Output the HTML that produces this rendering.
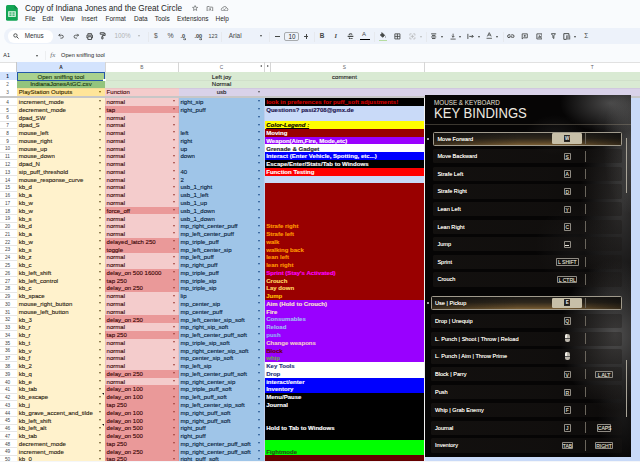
<!DOCTYPE html><html><head><meta charset="utf-8"><style>
*{box-sizing:border-box;margin:0;padding:0}
html,body{width:640px;height:462px;overflow:hidden;background:#f9fbfd;font-family:"Liberation Sans",sans-serif}
.ab{position:absolute}
.c{position:absolute;font-size:6.05px;line-height:7.77px;white-space:nowrap;overflow:hidden;padding-left:1.8px;-webkit-text-stroke:0.12px currentColor}
.dd{position:absolute;width:0;height:0;border-left:1.7px solid transparent;border-right:1.7px solid transparent;border-top:2.1px solid #555}
.rh{position:absolute;left:0;width:17px;font-size:4.7px;color:#45484c;text-align:center;background:#fff;padding-right:2px}
.hl{position:absolute;background:#e2e2e2}
.menu{position:absolute;top:14.6px;font-size:6.45px;color:#1f1f1f;line-height:8px}
.tb{position:absolute;color:#444746}
.kb{position:absolute;left:0;height:14.2px;background:rgba(30,27,24,0.82);border-radius:1.5px}
.kl{position:absolute;left:5px;top:0;line-height:14.2px;font-size:5.6px;color:#f2eee6;white-space:nowrap;text-shadow:0 0 0.25px #f2eee6}
.kk{position:absolute;height:7.4px;border:0.5px solid #8f8b83;border-radius:0.9px;font-size:5px;line-height:6.4px;color:#e6e2da;text-align:center;-webkit-text-stroke:0.1px #e6e2da}
.sepv{position:absolute;width:0.7px;height:10.5px;background:#6a655c}
</style></head><body>

<div class="ab" style="left:0;top:0;width:640px;height:62px;background:#f9fbfd"></div>
<svg class="ab" style="left:6.4px;top:4.9px" width="11.8" height="15.8" viewBox="0 0 12 16">
<path d="M1.6 0 H8.6 L12 3.6 V14.4 Q12 16 10.4 16 H1.6 Q0 16 0 14.4 V1.6 Q0 0 1.6 0Z" fill="#12a454"/>
<path d="M8.6 0 V2.9 Q8.6 3.6 9.3 3.6 H12Z" fill="#0d8a45"/>
<rect x="2.8" y="6.9" width="6.6" height="4.6" fill="none" stroke="#dff5e6" stroke-width="1.2"/>
<line x1="2.8" y1="9.2" x2="9.4" y2="9.2" stroke="#dff5e6" stroke-width="0.9"/>
<line x1="6.1" y1="6.9" x2="6.1" y2="11.5" stroke="#dff5e6" stroke-width="0.9"/>
</svg>
<div class="ab" style="left:25px;top:4.3px;font-size:8.2px;line-height:10px;color:#1f1f1f;white-space:nowrap">Copy of Indiana Jones and the Great Circle</div>
<svg class="ab" style="left:192px;top:5.2px" width="6.2" height="6" viewBox="0 0 24 23"><path d="M12 2 L14.9 8.6 L22 9.2 L16.6 13.9 L18.2 21 L12 17.3 L5.8 21 L7.4 13.9 L2 9.2 L9.1 8.6Z" fill="none" stroke="#444746" stroke-width="2.2" stroke-linejoin="round"/></svg>
<svg class="ab" style="left:206px;top:5.5px" width="7.8" height="5.6" viewBox="0 0 24 20"><path d="M2 3 Q2 1.5 3.5 1.5 H9 L11 4 H20.5 Q22 4 22 5.5 V17 Q22 18.5 20.5 18.5 H3.5 Q2 18.5 2 17Z" fill="none" stroke="#444746" stroke-width="2.2"/><path d="M11 8 L15 11.2 L11 14.4 M7.5 11.2 H15" fill="none" stroke="#444746" stroke-width="2"/></svg>
<svg class="ab" style="left:219.6px;top:5.8px" width="9.2" height="5.3" viewBox="0 0 28 20"><path d="M7 18 Q1.5 18 1.5 12.8 Q1.5 8 6.5 7.6 Q8.5 2 14.5 2 Q21 2 22.2 8.2 Q26.5 8.8 26.5 13 Q26.5 18 21.5 18Z" fill="none" stroke="#444746" stroke-width="2.2"/><path d="M9.5 11.5 L12.8 14.6 L18.8 8.6" fill="none" stroke="#444746" stroke-width="2.2"/></svg>
<div class="menu" style="left:25px">File</div>
<div class="menu" style="left:42.2px">Edit</div>
<div class="menu" style="left:60.6px">View</div>
<div class="menu" style="left:81.3px">Insert</div>
<div class="menu" style="left:105.5px">Format</div>
<div class="menu" style="left:134px">Data</div>
<div class="menu" style="left:154.7px">Tools</div>
<div class="menu" style="left:177px">Extensions</div>
<div class="menu" style="left:215.5px">Help</div>
<div class="ab" style="left:4px;top:27.8px;width:700px;height:16.4px;border-radius:8.2px;background:#edf2fa"></div>
<div class="ab" style="left:7.8px;top:30.4px;width:45px;height:12.4px;border-radius:6.2px;background:#fff"></div>
<svg class="ab" style="left:12.8px;top:33.2px" width="6.2" height="6.2" viewBox="0 0 24 24"><circle cx="9.5" cy="9.5" r="6.5" fill="none" stroke="#444746" stroke-width="3.50"/><line x1="14.5" y1="14.5" x2="21.5" y2="21.5" stroke="#444746" stroke-width="3.75"/></svg>
<div class="ab" style="left:24.8px;top:32.2px;font-size:6.3px;line-height:8px;color:#2d2f31">Menus</div>
<svg class="ab" style="left:58.3px;top:33.2px" width="6.4" height="6" viewBox="0 0 24 22"><path d="M8 3 L3 8 L8 13 M3 8 H14 Q20 8 20 13.5 Q20 19 14 19 H9" fill="none" stroke="#444746" stroke-width="3.25"/></svg>
<svg class="ab" style="left:72.6px;top:33.2px" width="6.4" height="6" viewBox="0 0 24 22"><path d="M16 3 L21 8 L16 13 M21 8 H10 Q4 8 4 13.5 Q4 19 10 19 H15" fill="none" stroke="#444746" stroke-width="3.25"/></svg>
<svg class="ab" style="left:86px;top:32.8px" width="7.4" height="6.8" viewBox="0 0 24 22"><path d="M6 6 V2 H18 V6 M3 7 H21 V16 H18 M6 16 H3 V7 M6 12 H18 V21 H6Z" fill="none" stroke="#444746" stroke-width="3.00"/></svg>
<svg class="ab" style="left:99.4px;top:32.4px" width="7.4" height="7.6" viewBox="0 0 24 24"><path d="M4 2 H17 V7 H4Z M17 4.5 H20 V11 H11 V15 M9 15 H13 V22 H9Z" fill="none" stroke="#444746" stroke-width="3.00"/></svg>
<div class="ab" style="left:114.5px;top:32.3px;font-size:6.3px;line-height:8px;color:#b1b3b4">100%</div>
<div class="dd" style="left:137.8px;top:35.4px;border-top-color:#b1b3b4"></div>
<div class="ab" style="left:147.8px;top:31.5px;width:0.5px;height:10px;background:#e6e9ee"></div>
<div class="ab" style="left:154px;top:32px;font-size:6.6px;line-height:8px;color:#555">$</div>
<div class="ab" style="left:167.4px;top:31.8px;font-size:6.9px;line-height:8px;color:#444746">%</div>
<div class="ab" style="left:180.4px;top:31.8px;font-size:5.6px;line-height:8px;color:#444746;font-weight:bold">.0</div>
<svg class="ab" style="left:183.2px;top:38.3px" width="3.6" height="2.4" viewBox="0 0 12 8"><path d="M0 4 H8 M6 1 L10 4 L6 7" fill="none" stroke="#444746" stroke-width="2.50"/></svg>
<div class="ab" style="left:194.4px;top:31.8px;font-size:5.6px;line-height:8px;color:#444746;font-weight:bold">.00</div>
<svg class="ab" style="left:198.5px;top:38.3px" width="3.6" height="2.4" viewBox="0 0 12 8"><path d="M0 4 H8 M6 1 L10 4 L6 7" fill="none" stroke="#444746" stroke-width="2.50"/></svg>
<div class="ab" style="left:208.6px;top:32.4px;font-size:5.4px;line-height:8px;color:#444746">123</div>
<div class="ab" style="left:220.8px;top:31.5px;width:0.5px;height:10px;background:#e6e9ee"></div>
<div class="ab" style="left:228.8px;top:32.2px;font-size:6.4px;line-height:8px;color:#444746">Arial</div>
<div class="dd" style="left:259.5px;top:35.4px;border-top-color:#444746"></div>
<div class="ab" style="left:269.4px;top:31.5px;width:0.5px;height:10px;background:#e6e9ee"></div>
<div class="ab" style="left:274.8px;top:36.2px;width:5px;height:0.9px;background:#444746"></div>
<div class="ab" style="left:284.4px;top:31.6px;width:15px;height:9.6px;border:0.6px solid #a8abae;border-radius:2px;font-size:6.3px;line-height:8.4px;text-align:center;color:#1f1f1f">10</div>
<div class="ab" style="left:303.6px;top:36.2px;width:4.8px;height:0.9px;background:#444746"></div>
<div class="ab" style="left:305.55px;top:34.3px;width:0.9px;height:4.8px;background:#444746"></div>
<div class="ab" style="left:313.5px;top:31.5px;width:0.5px;height:10px;background:#e6e9ee"></div>
<div class="ab" style="left:319.7px;top:32.2px;font-size:6.4px;line-height:8px;color:#444746;font-weight:bold">B</div>
<div class="ab" style="left:334.4px;top:32.2px;font-size:6.4px;line-height:8px;color:#444746;font-weight:bold;font-style:italic;font-family:'Liberation Serif'">I</div>
<svg class="ab" style="left:347.2px;top:32.6px" width="7" height="6.8" viewBox="0 0 24 24"><path d="M7 7 Q7 2.5 12 2.5 Q16.5 2.5 17.5 6 M2 12 H22 M7.5 16.5 Q8.5 21.5 12.5 21.5 Q17.5 21.5 17.5 17.5" fill="none" stroke="#444746" stroke-width="4.00"/></svg>
<div class="ab" style="left:362px;top:31px;font-size:6px;line-height:7px;color:#444746">A</div>
<div class="ab" style="left:359.8px;top:39.3px;width:10px;height:1.1px;background:#000"></div>
<div class="ab" style="left:373.8px;top:31.5px;width:0.5px;height:10px;background:#e6e9ee"></div>
<svg class="ab" style="left:378.8px;top:31.8px" width="8" height="7" viewBox="0 0 24 21"><path d="M4 9 L10 3 L17 10 L11 16 Z" fill="#444746" stroke="#444746" stroke-width="2.50"/><path d="M9 2 L6 -1" stroke="#444746" stroke-width="3.00"/><path d="M19.5 12 Q22 16 20 17.5 Q17.5 17 19.5 12Z" fill="#444746"/></svg>
<div class="ab" style="left:378.6px;top:39.5px;width:8.6px;height:0.9px;background:#b6dca0"></div>
<svg class="ab" style="left:394.4px;top:32.8px" width="6.8" height="6.8" viewBox="0 0 24 24"><path d="M3 3 H21 V21 H3Z M12 3 V21 M3 12 H21" fill="none" stroke="#444746" stroke-width="3.00"/></svg>
<svg class="ab" style="left:409.4px;top:32.8px" width="6.8" height="6.8" viewBox="0 0 24 24"><path d="M3 3 H9 M15 3 H21 V9 M21 15 V21 H15 M9 21 H3 V15 M3 9 V3 M12 6 V18 M6 12 H18" fill="none" stroke="#b8babb" stroke-width="2.75"/></svg>
<div class="dd" style="left:420px;top:35.6px;border-top-color:#b8babb"></div>
<div class="ab" style="left:425.8px;top:31.5px;width:0.5px;height:10px;background:#e6e9ee"></div>
<svg class="ab" style="left:430.3px;top:32.8px" width="7.4" height="6.8" viewBox="0 0 24 24"><path d="M3 3 H21 M6 8.5 H18 M3 14 H21 M6 19.5 H18" fill="none" stroke="#444746" stroke-width="3.25"/></svg>
<div class="dd" style="left:441px;top:35.6px;border-top-color:#444746"></div>
<svg class="ab" style="left:449.6px;top:32.6px" width="6.2" height="7" viewBox="0 0 24 26"><path d="M12 2 V16 M7 11 L12 16 L17 11 M2 23 H22" fill="none" stroke="#444746" stroke-width="3.25"/></svg>
<div class="dd" style="left:458.8px;top:35.6px;border-top-color:#444746"></div>
<svg class="ab" style="left:467px;top:32.8px" width="7.4" height="6.8" viewBox="0 0 26 24"><path d="M3 3 V21 M8 12 H22 M17 7 L22 12 L17 17" fill="none" stroke="#444746" stroke-width="3.25"/></svg>
<div class="dd" style="left:477.5px;top:35.6px;border-top-color:#444746"></div>
<svg class="ab" style="left:485.7px;top:32.4px" width="6.5" height="7.2" viewBox="0 0 24 26"><path d="M5 16 L12 2 L19 16 M7.5 11 H16.5 M2 23 H22" fill="none" stroke="#444746" stroke-width="3.00"/></svg>
<div class="dd" style="left:495.8px;top:35.6px;border-top-color:#444746"></div>
<div class="ab" style="left:502.5px;top:31.5px;width:0.5px;height:10px;background:#e6e9ee"></div>
<svg class="ab" style="left:507.2px;top:34px" width="7.6" height="4.4" viewBox="0 0 26 14"><path d="M11 2 H7 Q2 2 2 7 Q2 12 7 12 H11 M15 2 H19 Q24 2 24 7 Q24 12 19 12 H15 M8 7 H18" fill="none" stroke="#444746" stroke-width="3.25"/></svg>
<svg class="ab" style="left:521.3px;top:32.8px" width="7.5" height="6.8" viewBox="0 0 24 24"><path d="M3 3 H21 V17 H7 L3 21Z M12 6.5 V13.5 M8.5 10 H15.5" fill="none" stroke="#444746" stroke-width="3.00"/></svg>
<svg class="ab" style="left:535.6px;top:32.8px" width="6.8" height="6.8" viewBox="0 0 24 24"><path d="M3 3 H21 V21 H3Z M8 13 V17 M12 8 V17 M16 11 V17" fill="none" stroke="#444746" stroke-width="3.00"/></svg>
<svg class="ab" style="left:551.3px;top:33px" width="4.8" height="6.2" viewBox="0 0 16 20"><path d="M1 2 H15 L9.5 9 V18 L6.5 16 V9Z" fill="none" stroke="#444746" stroke-width="3.00"/></svg>
<svg class="ab" style="left:563.3px;top:32.6px" width="8" height="7" viewBox="0 0 24 22"><path d="M2 2 H18 V8 M2 2 V20 H10" fill="none" stroke="#444746" stroke-width="3.00"/><rect x="9" y="8" width="13" height="12" fill="#444746"/><path d="M9 12 H22 M9 16 H22 M15.5 8 V20" stroke="#edf2fa" stroke-width="1.62"/></svg>
<div class="dd" style="left:573.5px;top:35.6px;border-top-color:#444746"></div>
<div class="ab" style="left:584.2px;top:32.2px;font-size:6.4px;line-height:8px;color:#444746">&#931;</div>
<div class="ab" style="left:3.3px;top:51.3px;font-size:5.4px;line-height:8px;color:#1f1f1f">A1</div>
<div class="dd" style="left:36.4px;top:54.6px;border-top-color:#444746"></div>
<div class="ab" style="left:44.6px;top:51px;width:0.5px;height:9px;background:#eceef0"></div>
<div class="ab" style="left:50.3px;top:50.6px;font-size:7px;line-height:8px;color:#6a6f74;font-style:italic;font-family:'Liberation Serif'">fx</div>
<div class="ab" style="left:61px;top:51.4px;font-size:5.65px;line-height:8px;color:#1f1f1f;white-space:nowrap">Open sniffing tool</div>
<div class="ab" style="left:0;top:61.8px;width:640px;height:400.2px;background:#fff"></div>
<div class="ab" style="left:0;top:61.8px;width:640px;height:10.200000000000003px;background:#fff;border-top:0.5px solid #e1e1e1"></div>
<div class="ab" style="left:17.0px;top:61.8px;width:87.8px;height:10.200000000000003px;background:#d3e3fd"></div>
<div class="ab" style="left:17.0px;top:62.599999999999994px;width:87.8px;height:9px;text-align:center;font-size:4.8px;line-height:9px;color:#1f1f1f;font-weight:bold">A</div>
<div class="ab" style="left:104.5px;top:61.8px;width:0.6px;height:10.200000000000003px;background:#d6d6d6"></div>
<div class="ab" style="left:104.8px;top:62.599999999999994px;width:73.89999999999999px;height:9px;text-align:center;font-size:4.8px;line-height:9px;color:#5f6368;font-weight:normal">B</div>
<div class="ab" style="left:178.39999999999998px;top:61.8px;width:0.6px;height:10.200000000000003px;background:#d6d6d6"></div>
<div class="ab" style="left:178.7px;top:62.599999999999994px;width:85.69999999999999px;height:9px;text-align:center;font-size:4.8px;line-height:9px;color:#5f6368;font-weight:normal">C</div>
<div class="ab" style="left:264.09999999999997px;top:61.8px;width:0.6px;height:10.200000000000003px;background:#d6d6d6"></div>
<div class="ab" style="left:264.4px;top:62.599999999999994px;width:160.10000000000002px;height:9px;text-align:center;font-size:4.8px;line-height:9px;color:#5f6368;font-weight:normal">S</div>
<div class="ab" style="left:424.2px;top:61.8px;width:0.6px;height:10.200000000000003px;background:#d6d6d6"></div>
<div class="ab" style="left:424.5px;top:62.599999999999994px;width:335.5px;height:9px;text-align:center;font-size:4.8px;line-height:9px;color:#5f6368;font-weight:normal">T</div>
<div class="ab" style="left:759.7px;top:61.8px;width:0.6px;height:10.200000000000003px;background:#d6d6d6"></div>
<div class="ab" style="left:259.8px;top:65.1px;width:0;height:0;border-top:1.6px solid transparent;border-bottom:1.6px solid transparent;border-right:2px solid #555"></div>
<div class="ab" style="left:264.09999999999997px;top:72.0px;width:0.6px;height:23.799999999999997px;background:rgba(0,0,0,0.12)"></div>
<div class="ab" style="left:266.8px;top:65.1px;width:0;height:0;border-top:1.6px solid transparent;border-bottom:1.6px solid transparent;border-left:2px solid #555"></div>
<div class="ab" style="left:270.2px;top:61.8px;width:0.5px;height:10.200000000000003px;background:#d6d6d6"></div>
<div class="ab" style="left:0;top:71.5px;width:640px;height:0.6px;background:#c4c7c5"></div>
<div class="ab" style="left:15.8px;top:61.8px;width:1.3px;height:10.200000000000003px;background:#c8c8c8"></div>
<div class="ab" style="left:17.0px;top:72.0px;width:623.0px;height:16.099999999999994px;background:#d9ead3"></div>
<div class="ab" style="left:17.0px;top:72.0px;width:87.8px;height:8.200000000000003px;background:#a9d18e"></div>
<div class="ab" style="left:17.0px;top:80.2px;width:87.8px;height:7.8999999999999915px;background:#93c47d"></div>
<div class="ab" style="left:17.0px;top:88.1px;width:87.8px;height:7.700000000000003px;background:#ffe599"></div>
<div class="ab" style="left:104.8px;top:88.1px;width:73.89999999999999px;height:7.700000000000003px;background:#f4cccc"></div>
<div class="ab" style="left:178.7px;top:88.1px;width:461.3px;height:7.700000000000003px;background:#d9d2e9"></div>
<div class="ab" style="left:17.0px;top:79.9px;width:623px;height:0.5px;background:rgba(0,0,0,0.04)"></div>
<div class="ab" style="left:17.0px;top:87.8px;width:623px;height:0.5px;background:rgba(0,0,0,0.04)"></div>
<div class="rh" style="top:72.0px;height:8.200000000000003px;line-height:9.800000000000002px;overflow:hidden;background:#d3e3fd;color:#041e49;font-weight:bold">1</div>
<div class="rh" style="top:80.2px;height:7.8999999999999915px;line-height:9.499999999999991px;overflow:hidden;background:#fff;color:#5f6368;font-weight:normal">2</div>
<div class="rh" style="top:88.1px;height:7.700000000000003px;line-height:9.300000000000002px;overflow:hidden;background:#fff;color:#5f6368;font-weight:normal">3</div>
<div class="c" style="left:17.0px;top:72.5px;width:87.8px;height:8.200000000000003px;line-height:8.200000000000003px;color:#1b3a10;text-align:center;padding-left:0">Open sniffing tool</div>
<div class="c" style="left:17.0px;top:81.4px;width:87.8px;height:7.8999999999999915px;line-height:7.8999999999999915px;color:#1b3a10;text-align:center;padding-left:0">IndianaJonesAtGC.csv</div>
<div class="c" style="left:17.0px;top:88.89999999999999px;width:87.8px;height:7.700000000000003px;line-height:7.700000000000003px;color:#3a2e00;text-align:left;">PlayStation Outputs</div>
<div class="c" style="left:104.8px;top:88.89999999999999px;width:73.89999999999999px;height:7.700000000000003px;line-height:7.700000000000003px;color:#4a0c0c;text-align:left;">Function</div>
<div class="c" style="left:178.7px;top:72.5px;width:85.69999999999999px;height:8.200000000000003px;line-height:8.200000000000003px;color:#222;text-align:center;padding-left:0">Left joy</div>
<div class="c" style="left:178.7px;top:81.4px;width:85.69999999999999px;height:7.8999999999999915px;line-height:7.8999999999999915px;color:#222;text-align:center;padding-left:0">Normal</div>
<div class="c" style="left:178.7px;top:88.89999999999999px;width:85.69999999999999px;height:7.700000000000003px;line-height:7.700000000000003px;color:#222;text-align:center;padding-left:0">usb</div>
<div class="c" style="left:264.4px;top:72.5px;width:160.10000000000002px;height:8.200000000000003px;line-height:8.200000000000003px;color:#222;text-align:center;padding-left:0">comment</div>
<div class="dd" style="left:98.8px;top:91.1px;border-top-color:#7f6000"></div>
<div class="dd" style="left:258.4px;top:91.1px;border-top-color:#555"></div>
<div class="ab" style="left:17.0px;top:72.0px;width:88.1px;height:8.500000000000004px;border:1.1px solid #2458a8"></div>
<div class="ab" style="left:103.39999999999999px;top:79.2px;width:2.2px;height:2.2px;background:#2458a8;border:0.4px solid #fff"></div>
<div class="ab" style="left:0px;top:95.8px;width:640px;height:2.0px;background:#c7c7c7"></div>
<div class="rh" style="top:97.8px;height:8.17px;line-height:10.37px;overflow:hidden">4</div>
<div class="ab" style="left:17.0px;top:97.8px;width:87.8px;height:8.370000000000005px;background:#fff2cc"></div>
<div class="ab" style="left:104.8px;top:97.8px;width:73.89999999999999px;height:8.370000000000005px;background:#f4cccc"></div>
<div class="ab" style="left:178.7px;top:97.8px;width:85.69999999999999px;height:8.370000000000005px;background:#9fc5e8"></div>
<div class="ab" style="left:264.4px;top:97.8px;width:160.10000000000002px;height:8.370000000000005px;background:#c9daf8"></div>
<div class="ab" style="left:264.7px;top:97.8px;width:159.3px;height:8.370000000000005px;background:#000000"></div>
<div class="rh" style="top:105.57px;height:8.17px;line-height:10.37px;overflow:hidden">5</div>
<div class="ab" style="left:17.0px;top:105.57px;width:87.8px;height:8.370000000000005px;background:#fff2cc"></div>
<div class="ab" style="left:104.8px;top:105.57px;width:73.89999999999999px;height:8.370000000000005px;background:#ea9999"></div>
<div class="ab" style="left:178.7px;top:105.57px;width:85.69999999999999px;height:8.370000000000005px;background:#9fc5e8"></div>
<div class="ab" style="left:264.4px;top:105.57px;width:160.10000000000002px;height:8.370000000000005px;background:#c9daf8"></div>
<div class="rh" style="top:113.34px;height:8.17px;line-height:10.37px;overflow:hidden">6</div>
<div class="ab" style="left:17.0px;top:113.34px;width:87.8px;height:8.370000000000005px;background:#fff2cc"></div>
<div class="ab" style="left:104.8px;top:113.34px;width:73.89999999999999px;height:8.370000000000005px;background:#f4cccc"></div>
<div class="ab" style="left:178.7px;top:113.34px;width:85.69999999999999px;height:8.370000000000005px;background:#9fc5e8"></div>
<div class="ab" style="left:264.4px;top:113.34px;width:160.10000000000002px;height:8.370000000000005px;background:#c9daf8"></div>
<div class="rh" style="top:121.11px;height:8.17px;line-height:10.37px;overflow:hidden">7</div>
<div class="ab" style="left:17.0px;top:121.11px;width:87.8px;height:8.36999999999999px;background:#fff2cc"></div>
<div class="ab" style="left:104.8px;top:121.11px;width:73.89999999999999px;height:8.36999999999999px;background:#f4cccc"></div>
<div class="ab" style="left:178.7px;top:121.11px;width:85.69999999999999px;height:8.36999999999999px;background:#9fc5e8"></div>
<div class="ab" style="left:264.4px;top:121.11px;width:160.10000000000002px;height:8.36999999999999px;background:#c9daf8"></div>
<div class="ab" style="left:264.7px;top:121.11px;width:159.3px;height:8.36999999999999px;background:#ffff00"></div>
<div class="rh" style="top:128.88px;height:8.17px;line-height:10.37px;overflow:hidden">8</div>
<div class="ab" style="left:17.0px;top:128.88px;width:87.8px;height:8.370000000000005px;background:#fff2cc"></div>
<div class="ab" style="left:104.8px;top:128.88px;width:73.89999999999999px;height:8.370000000000005px;background:#f4cccc"></div>
<div class="ab" style="left:178.7px;top:128.88px;width:85.69999999999999px;height:8.370000000000005px;background:#9fc5e8"></div>
<div class="ab" style="left:264.4px;top:128.88px;width:160.10000000000002px;height:8.370000000000005px;background:#c9daf8"></div>
<div class="ab" style="left:264.7px;top:128.88px;width:159.3px;height:8.370000000000005px;background:#990000"></div>
<div class="rh" style="top:136.64999999999998px;height:8.17px;line-height:10.37px;overflow:hidden">9</div>
<div class="ab" style="left:17.0px;top:136.64999999999998px;width:87.8px;height:8.370000000000005px;background:#fff2cc"></div>
<div class="ab" style="left:104.8px;top:136.64999999999998px;width:73.89999999999999px;height:8.370000000000005px;background:#f4cccc"></div>
<div class="ab" style="left:178.7px;top:136.64999999999998px;width:85.69999999999999px;height:8.370000000000005px;background:#9fc5e8"></div>
<div class="ab" style="left:264.4px;top:136.64999999999998px;width:160.10000000000002px;height:8.370000000000005px;background:#c9daf8"></div>
<div class="ab" style="left:264.7px;top:136.64999999999998px;width:159.3px;height:8.370000000000005px;background:#9900ff"></div>
<div class="rh" style="top:144.42px;height:8.17px;line-height:10.37px;overflow:hidden">10</div>
<div class="ab" style="left:17.0px;top:144.42px;width:87.8px;height:8.370000000000005px;background:#fff2cc"></div>
<div class="ab" style="left:104.8px;top:144.42px;width:73.89999999999999px;height:8.370000000000005px;background:#f4cccc"></div>
<div class="ab" style="left:178.7px;top:144.42px;width:85.69999999999999px;height:8.370000000000005px;background:#9fc5e8"></div>
<div class="ab" style="left:264.4px;top:144.42px;width:160.10000000000002px;height:8.370000000000005px;background:#c9daf8"></div>
<div class="ab" style="left:264.7px;top:144.42px;width:159.3px;height:8.370000000000005px;background:#ffffff"></div>
<div class="rh" style="top:152.19px;height:8.17px;line-height:10.37px;overflow:hidden">11</div>
<div class="ab" style="left:17.0px;top:152.19px;width:87.8px;height:8.370000000000005px;background:#fff2cc"></div>
<div class="ab" style="left:104.8px;top:152.19px;width:73.89999999999999px;height:8.370000000000005px;background:#f4cccc"></div>
<div class="ab" style="left:178.7px;top:152.19px;width:85.69999999999999px;height:8.370000000000005px;background:#9fc5e8"></div>
<div class="ab" style="left:264.4px;top:152.19px;width:160.10000000000002px;height:8.370000000000005px;background:#c9daf8"></div>
<div class="ab" style="left:264.7px;top:152.19px;width:159.3px;height:8.370000000000005px;background:#0000ff"></div>
<div class="rh" style="top:159.95999999999998px;height:8.17px;line-height:10.37px;overflow:hidden">12</div>
<div class="ab" style="left:17.0px;top:159.95999999999998px;width:87.8px;height:8.370000000000005px;background:#fff2cc"></div>
<div class="ab" style="left:104.8px;top:159.95999999999998px;width:73.89999999999999px;height:8.370000000000005px;background:#f4cccc"></div>
<div class="ab" style="left:178.7px;top:159.95999999999998px;width:85.69999999999999px;height:8.370000000000005px;background:#9fc5e8"></div>
<div class="ab" style="left:264.4px;top:159.95999999999998px;width:160.10000000000002px;height:8.370000000000005px;background:#c9daf8"></div>
<div class="ab" style="left:264.7px;top:159.95999999999998px;width:159.3px;height:8.370000000000005px;background:#000000"></div>
<div class="rh" style="top:167.73px;height:8.17px;line-height:10.37px;overflow:hidden">13</div>
<div class="ab" style="left:17.0px;top:167.73px;width:87.8px;height:8.370000000000005px;background:#fff2cc"></div>
<div class="ab" style="left:104.8px;top:167.73px;width:73.89999999999999px;height:8.370000000000005px;background:#f4cccc"></div>
<div class="ab" style="left:178.7px;top:167.73px;width:85.69999999999999px;height:8.370000000000005px;background:#9fc5e8"></div>
<div class="ab" style="left:264.4px;top:167.73px;width:160.10000000000002px;height:8.370000000000005px;background:#c9daf8"></div>
<div class="ab" style="left:264.7px;top:167.73px;width:159.3px;height:8.370000000000005px;background:#ff0000"></div>
<div class="rh" style="top:175.5px;height:8.17px;line-height:10.37px;overflow:hidden">14</div>
<div class="ab" style="left:17.0px;top:175.5px;width:87.8px;height:8.370000000000005px;background:#fff2cc"></div>
<div class="ab" style="left:104.8px;top:175.5px;width:73.89999999999999px;height:8.370000000000005px;background:#f4cccc"></div>
<div class="ab" style="left:178.7px;top:175.5px;width:85.69999999999999px;height:8.370000000000005px;background:#9fc5e8"></div>
<div class="ab" style="left:264.4px;top:175.5px;width:160.10000000000002px;height:8.370000000000005px;background:#c9daf8"></div>
<div class="rh" style="top:183.26999999999998px;height:8.17px;line-height:10.37px;overflow:hidden">15</div>
<div class="ab" style="left:17.0px;top:183.26999999999998px;width:87.8px;height:8.370000000000005px;background:#fff2cc"></div>
<div class="ab" style="left:104.8px;top:183.26999999999998px;width:73.89999999999999px;height:8.370000000000005px;background:#f4cccc"></div>
<div class="ab" style="left:178.7px;top:183.26999999999998px;width:85.69999999999999px;height:8.370000000000005px;background:#9fc5e8"></div>
<div class="ab" style="left:264.4px;top:183.26999999999998px;width:160.10000000000002px;height:8.370000000000005px;background:#c9daf8"></div>
<div class="ab" style="left:264.7px;top:183.26999999999998px;width:159.3px;height:8.370000000000005px;background:#990000"></div>
<div class="rh" style="top:191.04px;height:8.17px;line-height:10.37px;overflow:hidden">16</div>
<div class="ab" style="left:17.0px;top:191.04px;width:87.8px;height:8.370000000000005px;background:#fff2cc"></div>
<div class="ab" style="left:104.8px;top:191.04px;width:73.89999999999999px;height:8.370000000000005px;background:#f4cccc"></div>
<div class="ab" style="left:178.7px;top:191.04px;width:85.69999999999999px;height:8.370000000000005px;background:#9fc5e8"></div>
<div class="ab" style="left:264.4px;top:191.04px;width:160.10000000000002px;height:8.370000000000005px;background:#c9daf8"></div>
<div class="ab" style="left:264.7px;top:191.04px;width:159.3px;height:8.370000000000005px;background:#990000"></div>
<div class="rh" style="top:198.81px;height:8.17px;line-height:10.37px;overflow:hidden">17</div>
<div class="ab" style="left:17.0px;top:198.81px;width:87.8px;height:8.370000000000005px;background:#fff2cc"></div>
<div class="ab" style="left:104.8px;top:198.81px;width:73.89999999999999px;height:8.370000000000005px;background:#f4cccc"></div>
<div class="ab" style="left:178.7px;top:198.81px;width:85.69999999999999px;height:8.370000000000005px;background:#9fc5e8"></div>
<div class="ab" style="left:264.4px;top:198.81px;width:160.10000000000002px;height:8.370000000000005px;background:#c9daf8"></div>
<div class="ab" style="left:264.7px;top:198.81px;width:159.3px;height:8.370000000000005px;background:#990000"></div>
<div class="rh" style="top:206.57999999999998px;height:8.17px;line-height:10.37px;overflow:hidden">18</div>
<div class="ab" style="left:17.0px;top:206.57999999999998px;width:87.8px;height:8.370000000000005px;background:#fff2cc"></div>
<div class="ab" style="left:104.8px;top:206.57999999999998px;width:73.89999999999999px;height:8.370000000000005px;background:#ea9999"></div>
<div class="ab" style="left:178.7px;top:206.57999999999998px;width:85.69999999999999px;height:8.370000000000005px;background:#9fc5e8"></div>
<div class="ab" style="left:264.4px;top:206.57999999999998px;width:160.10000000000002px;height:8.370000000000005px;background:#c9daf8"></div>
<div class="ab" style="left:264.7px;top:206.57999999999998px;width:159.3px;height:8.370000000000005px;background:#990000"></div>
<div class="rh" style="top:214.35px;height:8.17px;line-height:10.37px;overflow:hidden">19</div>
<div class="ab" style="left:17.0px;top:214.35px;width:87.8px;height:8.370000000000005px;background:#fff2cc"></div>
<div class="ab" style="left:104.8px;top:214.35px;width:73.89999999999999px;height:8.370000000000005px;background:#f4cccc"></div>
<div class="ab" style="left:178.7px;top:214.35px;width:85.69999999999999px;height:8.370000000000005px;background:#9fc5e8"></div>
<div class="ab" style="left:264.4px;top:214.35px;width:160.10000000000002px;height:8.370000000000005px;background:#c9daf8"></div>
<div class="ab" style="left:264.7px;top:214.35px;width:159.3px;height:8.370000000000005px;background:#990000"></div>
<div class="rh" style="top:222.12px;height:8.17px;line-height:10.37px;overflow:hidden">20</div>
<div class="ab" style="left:17.0px;top:222.12px;width:87.8px;height:8.370000000000005px;background:#fff2cc"></div>
<div class="ab" style="left:104.8px;top:222.12px;width:73.89999999999999px;height:8.370000000000005px;background:#f4cccc"></div>
<div class="ab" style="left:178.7px;top:222.12px;width:85.69999999999999px;height:8.370000000000005px;background:#9fc5e8"></div>
<div class="ab" style="left:264.4px;top:222.12px;width:160.10000000000002px;height:8.370000000000005px;background:#c9daf8"></div>
<div class="ab" style="left:264.7px;top:222.12px;width:159.3px;height:8.370000000000005px;background:#990000"></div>
<div class="rh" style="top:229.89px;height:8.17px;line-height:10.37px;overflow:hidden">21</div>
<div class="ab" style="left:17.0px;top:229.89px;width:87.8px;height:8.370000000000005px;background:#fff2cc"></div>
<div class="ab" style="left:104.8px;top:229.89px;width:73.89999999999999px;height:8.370000000000005px;background:#f4cccc"></div>
<div class="ab" style="left:178.7px;top:229.89px;width:85.69999999999999px;height:8.370000000000005px;background:#9fc5e8"></div>
<div class="ab" style="left:264.4px;top:229.89px;width:160.10000000000002px;height:8.370000000000005px;background:#c9daf8"></div>
<div class="ab" style="left:264.7px;top:229.89px;width:159.3px;height:8.370000000000005px;background:#990000"></div>
<div class="rh" style="top:237.65999999999997px;height:8.17px;line-height:10.37px;overflow:hidden">22</div>
<div class="ab" style="left:17.0px;top:237.65999999999997px;width:87.8px;height:8.370000000000005px;background:#fff2cc"></div>
<div class="ab" style="left:104.8px;top:237.65999999999997px;width:73.89999999999999px;height:8.370000000000005px;background:#ea9999"></div>
<div class="ab" style="left:178.7px;top:237.65999999999997px;width:85.69999999999999px;height:8.370000000000005px;background:#9fc5e8"></div>
<div class="ab" style="left:264.4px;top:237.65999999999997px;width:160.10000000000002px;height:8.370000000000005px;background:#c9daf8"></div>
<div class="ab" style="left:264.7px;top:237.65999999999997px;width:159.3px;height:8.370000000000005px;background:#990000"></div>
<div class="rh" style="top:245.43px;height:8.17px;line-height:10.37px;overflow:hidden">23</div>
<div class="ab" style="left:17.0px;top:245.43px;width:87.8px;height:8.370000000000005px;background:#fff2cc"></div>
<div class="ab" style="left:104.8px;top:245.43px;width:73.89999999999999px;height:8.370000000000005px;background:#ea9999"></div>
<div class="ab" style="left:178.7px;top:245.43px;width:85.69999999999999px;height:8.370000000000005px;background:#9fc5e8"></div>
<div class="ab" style="left:264.4px;top:245.43px;width:160.10000000000002px;height:8.370000000000005px;background:#c9daf8"></div>
<div class="ab" style="left:264.7px;top:245.43px;width:159.3px;height:8.370000000000005px;background:#990000"></div>
<div class="rh" style="top:253.2px;height:8.17px;line-height:10.37px;overflow:hidden">24</div>
<div class="ab" style="left:17.0px;top:253.2px;width:87.8px;height:8.370000000000005px;background:#fff2cc"></div>
<div class="ab" style="left:104.8px;top:253.2px;width:73.89999999999999px;height:8.370000000000005px;background:#f4cccc"></div>
<div class="ab" style="left:178.7px;top:253.2px;width:85.69999999999999px;height:8.370000000000005px;background:#9fc5e8"></div>
<div class="ab" style="left:264.4px;top:253.2px;width:160.10000000000002px;height:8.370000000000005px;background:#c9daf8"></div>
<div class="ab" style="left:264.7px;top:253.2px;width:159.3px;height:8.370000000000005px;background:#990000"></div>
<div class="rh" style="top:260.96999999999997px;height:8.17px;line-height:10.37px;overflow:hidden">25</div>
<div class="ab" style="left:17.0px;top:260.96999999999997px;width:87.8px;height:8.370000000000005px;background:#fff2cc"></div>
<div class="ab" style="left:104.8px;top:260.96999999999997px;width:73.89999999999999px;height:8.370000000000005px;background:#f4cccc"></div>
<div class="ab" style="left:178.7px;top:260.96999999999997px;width:85.69999999999999px;height:8.370000000000005px;background:#9fc5e8"></div>
<div class="ab" style="left:264.4px;top:260.96999999999997px;width:160.10000000000002px;height:8.370000000000005px;background:#c9daf8"></div>
<div class="ab" style="left:264.7px;top:260.96999999999997px;width:159.3px;height:8.370000000000005px;background:#990000"></div>
<div class="rh" style="top:268.74px;height:8.17px;line-height:10.37px;overflow:hidden">26</div>
<div class="ab" style="left:17.0px;top:268.74px;width:87.8px;height:8.370000000000005px;background:#fff2cc"></div>
<div class="ab" style="left:104.8px;top:268.74px;width:73.89999999999999px;height:8.370000000000005px;background:#ea9999"></div>
<div class="ab" style="left:178.7px;top:268.74px;width:85.69999999999999px;height:8.370000000000005px;background:#9fc5e8"></div>
<div class="ab" style="left:264.4px;top:268.74px;width:160.10000000000002px;height:8.370000000000005px;background:#c9daf8"></div>
<div class="ab" style="left:264.7px;top:268.74px;width:159.3px;height:8.370000000000005px;background:#990000"></div>
<div class="rh" style="top:276.51px;height:8.17px;line-height:10.37px;overflow:hidden">27</div>
<div class="ab" style="left:17.0px;top:276.51px;width:87.8px;height:8.370000000000005px;background:#fff2cc"></div>
<div class="ab" style="left:104.8px;top:276.51px;width:73.89999999999999px;height:8.370000000000005px;background:#ea9999"></div>
<div class="ab" style="left:178.7px;top:276.51px;width:85.69999999999999px;height:8.370000000000005px;background:#9fc5e8"></div>
<div class="ab" style="left:264.4px;top:276.51px;width:160.10000000000002px;height:8.370000000000005px;background:#c9daf8"></div>
<div class="ab" style="left:264.7px;top:276.51px;width:159.3px;height:8.370000000000005px;background:#990000"></div>
<div class="rh" style="top:284.28px;height:8.17px;line-height:10.37px;overflow:hidden">28</div>
<div class="ab" style="left:17.0px;top:284.28px;width:87.8px;height:8.370000000000005px;background:#fff2cc"></div>
<div class="ab" style="left:104.8px;top:284.28px;width:73.89999999999999px;height:8.370000000000005px;background:#ea9999"></div>
<div class="ab" style="left:178.7px;top:284.28px;width:85.69999999999999px;height:8.370000000000005px;background:#9fc5e8"></div>
<div class="ab" style="left:264.4px;top:284.28px;width:160.10000000000002px;height:8.370000000000005px;background:#c9daf8"></div>
<div class="ab" style="left:264.7px;top:284.28px;width:159.3px;height:8.370000000000005px;background:#990000"></div>
<div class="rh" style="top:292.05px;height:8.17px;line-height:10.37px;overflow:hidden">29</div>
<div class="ab" style="left:17.0px;top:292.05px;width:87.8px;height:8.370000000000005px;background:#fff2cc"></div>
<div class="ab" style="left:104.8px;top:292.05px;width:73.89999999999999px;height:8.370000000000005px;background:#f4cccc"></div>
<div class="ab" style="left:178.7px;top:292.05px;width:85.69999999999999px;height:8.370000000000005px;background:#9fc5e8"></div>
<div class="ab" style="left:264.4px;top:292.05px;width:160.10000000000002px;height:8.370000000000005px;background:#c9daf8"></div>
<div class="ab" style="left:264.7px;top:292.05px;width:159.3px;height:8.370000000000005px;background:#990000"></div>
<div class="rh" style="top:299.82px;height:8.17px;line-height:10.37px;overflow:hidden">30</div>
<div class="ab" style="left:17.0px;top:299.82px;width:87.8px;height:8.370000000000005px;background:#fff2cc"></div>
<div class="ab" style="left:104.8px;top:299.82px;width:73.89999999999999px;height:8.370000000000005px;background:#f4cccc"></div>
<div class="ab" style="left:178.7px;top:299.82px;width:85.69999999999999px;height:8.370000000000005px;background:#9fc5e8"></div>
<div class="ab" style="left:264.4px;top:299.82px;width:160.10000000000002px;height:8.370000000000005px;background:#c9daf8"></div>
<div class="ab" style="left:264.7px;top:299.82px;width:159.3px;height:8.370000000000005px;background:#9900ff"></div>
<div class="rh" style="top:307.59px;height:8.17px;line-height:10.37px;overflow:hidden">31</div>
<div class="ab" style="left:17.0px;top:307.59px;width:87.8px;height:8.370000000000005px;background:#fff2cc"></div>
<div class="ab" style="left:104.8px;top:307.59px;width:73.89999999999999px;height:8.370000000000005px;background:#f4cccc"></div>
<div class="ab" style="left:178.7px;top:307.59px;width:85.69999999999999px;height:8.370000000000005px;background:#9fc5e8"></div>
<div class="ab" style="left:264.4px;top:307.59px;width:160.10000000000002px;height:8.370000000000005px;background:#c9daf8"></div>
<div class="ab" style="left:264.7px;top:307.59px;width:159.3px;height:8.370000000000005px;background:#9900ff"></div>
<div class="rh" style="top:315.36px;height:8.17px;line-height:10.37px;overflow:hidden">32</div>
<div class="ab" style="left:17.0px;top:315.36px;width:87.8px;height:8.370000000000005px;background:#fff2cc"></div>
<div class="ab" style="left:104.8px;top:315.36px;width:73.89999999999999px;height:8.370000000000005px;background:#ea9999"></div>
<div class="ab" style="left:178.7px;top:315.36px;width:85.69999999999999px;height:8.370000000000005px;background:#9fc5e8"></div>
<div class="ab" style="left:264.4px;top:315.36px;width:160.10000000000002px;height:8.370000000000005px;background:#c9daf8"></div>
<div class="ab" style="left:264.7px;top:315.36px;width:159.3px;height:8.370000000000005px;background:#9900ff"></div>
<div class="rh" style="top:323.13px;height:8.17px;line-height:10.37px;overflow:hidden">33</div>
<div class="ab" style="left:17.0px;top:323.13px;width:87.8px;height:8.370000000000005px;background:#fff2cc"></div>
<div class="ab" style="left:104.8px;top:323.13px;width:73.89999999999999px;height:8.370000000000005px;background:#f4cccc"></div>
<div class="ab" style="left:178.7px;top:323.13px;width:85.69999999999999px;height:8.370000000000005px;background:#9fc5e8"></div>
<div class="ab" style="left:264.4px;top:323.13px;width:160.10000000000002px;height:8.370000000000005px;background:#c9daf8"></div>
<div class="ab" style="left:264.7px;top:323.13px;width:159.3px;height:8.370000000000005px;background:#9900ff"></div>
<div class="rh" style="top:330.9px;height:8.17px;line-height:10.37px;overflow:hidden">34</div>
<div class="ab" style="left:17.0px;top:330.9px;width:87.8px;height:8.370000000000005px;background:#fff2cc"></div>
<div class="ab" style="left:104.8px;top:330.9px;width:73.89999999999999px;height:8.370000000000005px;background:#ea9999"></div>
<div class="ab" style="left:178.7px;top:330.9px;width:85.69999999999999px;height:8.370000000000005px;background:#9fc5e8"></div>
<div class="ab" style="left:264.4px;top:330.9px;width:160.10000000000002px;height:8.370000000000005px;background:#c9daf8"></div>
<div class="ab" style="left:264.7px;top:330.9px;width:159.3px;height:8.370000000000005px;background:#9900ff"></div>
<div class="rh" style="top:338.66999999999996px;height:8.17px;line-height:10.37px;overflow:hidden">35</div>
<div class="ab" style="left:17.0px;top:338.66999999999996px;width:87.8px;height:8.370000000000005px;background:#fff2cc"></div>
<div class="ab" style="left:104.8px;top:338.66999999999996px;width:73.89999999999999px;height:8.370000000000005px;background:#f4cccc"></div>
<div class="ab" style="left:178.7px;top:338.66999999999996px;width:85.69999999999999px;height:8.370000000000005px;background:#9fc5e8"></div>
<div class="ab" style="left:264.4px;top:338.66999999999996px;width:160.10000000000002px;height:8.370000000000005px;background:#c9daf8"></div>
<div class="ab" style="left:264.7px;top:338.66999999999996px;width:159.3px;height:8.370000000000005px;background:#9900ff"></div>
<div class="rh" style="top:346.44px;height:8.17px;line-height:10.37px;overflow:hidden">36</div>
<div class="ab" style="left:17.0px;top:346.44px;width:87.8px;height:8.370000000000005px;background:#fff2cc"></div>
<div class="ab" style="left:104.8px;top:346.44px;width:73.89999999999999px;height:8.370000000000005px;background:#f4cccc"></div>
<div class="ab" style="left:178.7px;top:346.44px;width:85.69999999999999px;height:8.370000000000005px;background:#9fc5e8"></div>
<div class="ab" style="left:264.4px;top:346.44px;width:160.10000000000002px;height:8.370000000000005px;background:#c9daf8"></div>
<div class="ab" style="left:264.7px;top:346.44px;width:159.3px;height:8.370000000000005px;background:#9900ff"></div>
<div class="rh" style="top:354.21px;height:8.17px;line-height:10.37px;overflow:hidden">37</div>
<div class="ab" style="left:17.0px;top:354.21px;width:87.8px;height:8.370000000000005px;background:#fff2cc"></div>
<div class="ab" style="left:104.8px;top:354.21px;width:73.89999999999999px;height:8.370000000000005px;background:#f4cccc"></div>
<div class="ab" style="left:178.7px;top:354.21px;width:85.69999999999999px;height:8.370000000000005px;background:#9fc5e8"></div>
<div class="ab" style="left:264.4px;top:354.21px;width:160.10000000000002px;height:8.370000000000005px;background:#c9daf8"></div>
<div class="ab" style="left:264.7px;top:354.21px;width:159.3px;height:8.370000000000005px;background:#9900ff"></div>
<div class="rh" style="top:361.98px;height:8.17px;line-height:10.37px;overflow:hidden">38</div>
<div class="ab" style="left:17.0px;top:361.98px;width:87.8px;height:8.370000000000005px;background:#fff2cc"></div>
<div class="ab" style="left:104.8px;top:361.98px;width:73.89999999999999px;height:8.370000000000005px;background:#f4cccc"></div>
<div class="ab" style="left:178.7px;top:361.98px;width:85.69999999999999px;height:8.370000000000005px;background:#9fc5e8"></div>
<div class="ab" style="left:264.4px;top:361.98px;width:160.10000000000002px;height:8.370000000000005px;background:#c9daf8"></div>
<div class="ab" style="left:264.7px;top:361.98px;width:159.3px;height:8.370000000000005px;background:#ffffff"></div>
<div class="rh" style="top:369.75px;height:8.17px;line-height:10.37px;overflow:hidden">39</div>
<div class="ab" style="left:17.0px;top:369.75px;width:87.8px;height:8.370000000000005px;background:#fff2cc"></div>
<div class="ab" style="left:104.8px;top:369.75px;width:73.89999999999999px;height:8.370000000000005px;background:#ea9999"></div>
<div class="ab" style="left:178.7px;top:369.75px;width:85.69999999999999px;height:8.370000000000005px;background:#9fc5e8"></div>
<div class="ab" style="left:264.4px;top:369.75px;width:160.10000000000002px;height:8.370000000000005px;background:#c9daf8"></div>
<div class="ab" style="left:264.7px;top:369.75px;width:159.3px;height:8.370000000000005px;background:#ffffff"></div>
<div class="rh" style="top:377.52px;height:8.17px;line-height:10.37px;overflow:hidden">40</div>
<div class="ab" style="left:17.0px;top:377.52px;width:87.8px;height:8.370000000000005px;background:#fff2cc"></div>
<div class="ab" style="left:104.8px;top:377.52px;width:73.89999999999999px;height:8.370000000000005px;background:#f4cccc"></div>
<div class="ab" style="left:178.7px;top:377.52px;width:85.69999999999999px;height:8.370000000000005px;background:#9fc5e8"></div>
<div class="ab" style="left:264.4px;top:377.52px;width:160.10000000000002px;height:8.370000000000005px;background:#c9daf8"></div>
<div class="ab" style="left:264.7px;top:377.52px;width:159.3px;height:8.370000000000005px;background:#0000ff"></div>
<div class="rh" style="top:385.29px;height:8.17px;line-height:10.37px;overflow:hidden">41</div>
<div class="ab" style="left:17.0px;top:385.29px;width:87.8px;height:8.370000000000005px;background:#fff2cc"></div>
<div class="ab" style="left:104.8px;top:385.29px;width:73.89999999999999px;height:8.370000000000005px;background:#ea9999"></div>
<div class="ab" style="left:178.7px;top:385.29px;width:85.69999999999999px;height:8.370000000000005px;background:#9fc5e8"></div>
<div class="ab" style="left:264.4px;top:385.29px;width:160.10000000000002px;height:8.370000000000005px;background:#c9daf8"></div>
<div class="ab" style="left:264.7px;top:385.29px;width:159.3px;height:8.370000000000005px;background:#0000ff"></div>
<div class="rh" style="top:393.06px;height:8.17px;line-height:10.37px;overflow:hidden">42</div>
<div class="ab" style="left:17.0px;top:393.06px;width:87.8px;height:8.370000000000005px;background:#fff2cc"></div>
<div class="ab" style="left:104.8px;top:393.06px;width:73.89999999999999px;height:8.370000000000005px;background:#ea9999"></div>
<div class="ab" style="left:178.7px;top:393.06px;width:85.69999999999999px;height:8.370000000000005px;background:#9fc5e8"></div>
<div class="ab" style="left:264.4px;top:393.06px;width:160.10000000000002px;height:8.370000000000005px;background:#c9daf8"></div>
<div class="ab" style="left:264.7px;top:393.06px;width:159.3px;height:8.370000000000005px;background:#000000"></div>
<div class="rh" style="top:400.83px;height:8.17px;line-height:10.37px;overflow:hidden">43</div>
<div class="ab" style="left:17.0px;top:400.83px;width:87.8px;height:8.370000000000005px;background:#fff2cc"></div>
<div class="ab" style="left:104.8px;top:400.83px;width:73.89999999999999px;height:8.370000000000005px;background:#ea9999"></div>
<div class="ab" style="left:178.7px;top:400.83px;width:85.69999999999999px;height:8.370000000000005px;background:#9fc5e8"></div>
<div class="ab" style="left:264.4px;top:400.83px;width:160.10000000000002px;height:8.370000000000005px;background:#c9daf8"></div>
<div class="ab" style="left:264.7px;top:400.83px;width:159.3px;height:8.370000000000005px;background:#000000"></div>
<div class="rh" style="top:408.59999999999997px;height:8.17px;line-height:10.37px;overflow:hidden">44</div>
<div class="ab" style="left:17.0px;top:408.59999999999997px;width:87.8px;height:8.370000000000005px;background:#fff2cc"></div>
<div class="ab" style="left:104.8px;top:408.59999999999997px;width:73.89999999999999px;height:8.370000000000005px;background:#ea9999"></div>
<div class="ab" style="left:178.7px;top:408.59999999999997px;width:85.69999999999999px;height:8.370000000000005px;background:#9fc5e8"></div>
<div class="ab" style="left:264.4px;top:408.59999999999997px;width:160.10000000000002px;height:8.370000000000005px;background:#c9daf8"></div>
<div class="ab" style="left:264.7px;top:408.59999999999997px;width:159.3px;height:8.370000000000005px;background:#000000"></div>
<div class="rh" style="top:416.37px;height:8.17px;line-height:10.37px;overflow:hidden">45</div>
<div class="ab" style="left:17.0px;top:416.37px;width:87.8px;height:8.370000000000005px;background:#fff2cc"></div>
<div class="ab" style="left:104.8px;top:416.37px;width:73.89999999999999px;height:8.370000000000005px;background:#ea9999"></div>
<div class="ab" style="left:178.7px;top:416.37px;width:85.69999999999999px;height:8.370000000000005px;background:#9fc5e8"></div>
<div class="ab" style="left:264.4px;top:416.37px;width:160.10000000000002px;height:8.370000000000005px;background:#c9daf8"></div>
<div class="ab" style="left:264.7px;top:416.37px;width:159.3px;height:8.370000000000005px;background:#000000"></div>
<div class="rh" style="top:424.14px;height:8.17px;line-height:10.37px;overflow:hidden">46</div>
<div class="ab" style="left:17.0px;top:424.14px;width:87.8px;height:8.370000000000005px;background:#fff2cc"></div>
<div class="ab" style="left:104.8px;top:424.14px;width:73.89999999999999px;height:8.370000000000005px;background:#ea9999"></div>
<div class="ab" style="left:178.7px;top:424.14px;width:85.69999999999999px;height:8.370000000000005px;background:#9fc5e8"></div>
<div class="ab" style="left:264.4px;top:424.14px;width:160.10000000000002px;height:8.370000000000005px;background:#c9daf8"></div>
<div class="ab" style="left:264.7px;top:424.14px;width:159.3px;height:8.370000000000005px;background:#000000"></div>
<div class="rh" style="top:431.90999999999997px;height:8.17px;line-height:10.37px;overflow:hidden">47</div>
<div class="ab" style="left:17.0px;top:431.90999999999997px;width:87.8px;height:8.370000000000005px;background:#fff2cc"></div>
<div class="ab" style="left:104.8px;top:431.90999999999997px;width:73.89999999999999px;height:8.370000000000005px;background:#ea9999"></div>
<div class="ab" style="left:178.7px;top:431.90999999999997px;width:85.69999999999999px;height:8.370000000000005px;background:#9fc5e8"></div>
<div class="ab" style="left:264.4px;top:431.90999999999997px;width:160.10000000000002px;height:8.370000000000005px;background:#c9daf8"></div>
<div class="ab" style="left:264.7px;top:431.90999999999997px;width:159.3px;height:8.370000000000005px;background:#000000"></div>
<div class="rh" style="top:439.68px;height:8.17px;line-height:10.37px;overflow:hidden">48</div>
<div class="ab" style="left:17.0px;top:439.68px;width:87.8px;height:8.370000000000005px;background:#fff2cc"></div>
<div class="ab" style="left:104.8px;top:439.68px;width:73.89999999999999px;height:8.370000000000005px;background:#ea9999"></div>
<div class="ab" style="left:178.7px;top:439.68px;width:85.69999999999999px;height:8.370000000000005px;background:#9fc5e8"></div>
<div class="ab" style="left:264.4px;top:439.68px;width:160.10000000000002px;height:8.370000000000005px;background:#c9daf8"></div>
<div class="ab" style="left:264.7px;top:439.68px;width:159.3px;height:8.370000000000005px;background:#00ff00"></div>
<div class="rh" style="top:447.45px;height:8.17px;line-height:10.37px;overflow:hidden">49</div>
<div class="ab" style="left:17.0px;top:447.45px;width:87.8px;height:8.370000000000005px;background:#fff2cc"></div>
<div class="ab" style="left:104.8px;top:447.45px;width:73.89999999999999px;height:8.370000000000005px;background:#ea9999"></div>
<div class="ab" style="left:178.7px;top:447.45px;width:85.69999999999999px;height:8.370000000000005px;background:#9fc5e8"></div>
<div class="ab" style="left:264.4px;top:447.45px;width:160.10000000000002px;height:8.370000000000005px;background:#c9daf8"></div>
<div class="ab" style="left:264.7px;top:447.45px;width:159.3px;height:8.370000000000005px;background:#00ff00"></div>
<div class="rh" style="top:455.21999999999997px;height:8.17px;line-height:10.37px;overflow:hidden">50</div>
<div class="ab" style="left:17.0px;top:455.21999999999997px;width:87.8px;height:10.0px;background:#fff2cc"></div>
<div class="ab" style="left:104.8px;top:455.21999999999997px;width:73.89999999999999px;height:10.0px;background:#ea9999"></div>
<div class="ab" style="left:178.7px;top:455.21999999999997px;width:85.69999999999999px;height:10.0px;background:#9fc5e8"></div>
<div class="ab" style="left:264.4px;top:455.21999999999997px;width:160.10000000000002px;height:10.0px;background:#c9daf8"></div>
<div class="ab" style="left:264.7px;top:455.21999999999997px;width:159.3px;height:10.0px;background:#660000"></div>
<div class="c" style="left:17.0px;top:99.0px;width:80.8px;height:7.77px;line-height:7.77px;color:#2a2210;text-align:left;">increment_mode</div>
<div class="c" style="left:104.8px;top:99.0px;width:66.89999999999999px;height:7.77px;line-height:7.77px;color:#3a0606;text-align:left;">normal</div>
<div class="c" style="left:178.7px;top:99.0px;width:78.69999999999999px;height:7.77px;line-height:7.77px;color:#061c3a;text-align:left;">right_sip</div>
<div class="ab" style="left:0;top:105.07px;width:17px;height:0.8px;background:#e6e6e6"></div>
<div class="dd" style="left:98.6px;top:100.3px;border-top-color:#6b5a2a"></div>
<div class="dd" style="left:172.5px;top:100.3px;border-top-color:#a0403a"></div>
<div class="dd" style="left:258.2px;top:100.3px;border-top-color:#1f4f8a"></div>
<div class="c" style="left:264.4px;top:98.89999999999999px;width:160.10000000000002px;height:7.77px;line-height:7.77px;color:#d00000;font-weight:bold;overflow:visible;">look in preferences for puff_soft adjustments!</div>
<div class="c" style="left:17.0px;top:106.77px;width:80.8px;height:7.77px;line-height:7.77px;color:#2a2210;text-align:left;">decrement_mode</div>
<div class="c" style="left:104.8px;top:106.77px;width:66.89999999999999px;height:7.77px;line-height:7.77px;color:#3a0606;text-align:left;">tap</div>
<div class="c" style="left:178.7px;top:106.77px;width:78.69999999999999px;height:7.77px;line-height:7.77px;color:#061c3a;text-align:left;">right_puff</div>
<div class="ab" style="left:0;top:112.83999999999999px;width:17px;height:0.8px;background:#e6e6e6"></div>
<div class="dd" style="left:98.6px;top:108.07px;border-top-color:#6b5a2a"></div>
<div class="dd" style="left:172.5px;top:108.07px;border-top-color:#a0403a"></div>
<div class="dd" style="left:258.2px;top:108.07px;border-top-color:#1f4f8a"></div>
<div class="c" style="left:264.4px;top:106.66999999999999px;width:160.10000000000002px;height:7.77px;line-height:7.77px;color:#20124d;font-weight:bold;overflow:visible;">Questions? pasi2708@gmx.de</div>
<div class="c" style="left:17.0px;top:114.54px;width:80.8px;height:7.77px;line-height:7.77px;color:#2a2210;text-align:left;">dpad_SW</div>
<div class="c" style="left:104.8px;top:114.54px;width:66.89999999999999px;height:7.77px;line-height:7.77px;color:#3a0606;text-align:left;">normal</div>
<div class="c" style="left:178.7px;top:114.54px;width:78.69999999999999px;height:7.77px;line-height:7.77px;color:#061c3a;text-align:left;"></div>
<div class="ab" style="left:0;top:120.61px;width:17px;height:0.8px;background:#e6e6e6"></div>
<div class="dd" style="left:98.6px;top:115.84px;border-top-color:#6b5a2a"></div>
<div class="dd" style="left:172.5px;top:115.84px;border-top-color:#a0403a"></div>
<div class="dd" style="left:258.2px;top:115.84px;border-top-color:#1f4f8a"></div>
<div class="c" style="left:17.0px;top:122.31px;width:80.8px;height:7.77px;line-height:7.77px;color:#2a2210;text-align:left;">dpad_S</div>
<div class="c" style="left:104.8px;top:122.31px;width:66.89999999999999px;height:7.77px;line-height:7.77px;color:#3a0606;text-align:left;">normal</div>
<div class="c" style="left:178.7px;top:122.31px;width:78.69999999999999px;height:7.77px;line-height:7.77px;color:#061c3a;text-align:left;"></div>
<div class="ab" style="left:0;top:128.38px;width:17px;height:0.8px;background:#e6e6e6"></div>
<div class="dd" style="left:98.6px;top:123.61px;border-top-color:#6b5a2a"></div>
<div class="dd" style="left:172.5px;top:123.61px;border-top-color:#a0403a"></div>
<div class="dd" style="left:258.2px;top:123.61px;border-top-color:#1f4f8a"></div>
<div class="c" style="left:264.4px;top:122.21px;width:160.10000000000002px;height:7.77px;line-height:7.77px;color:#000000;font-weight:bold;overflow:visible;font-style:italic;text-decoration:underline;">Color-Legend :</div>
<div class="c" style="left:17.0px;top:130.07999999999998px;width:80.8px;height:7.77px;line-height:7.77px;color:#2a2210;text-align:left;">mouse_left</div>
<div class="c" style="left:104.8px;top:130.07999999999998px;width:66.89999999999999px;height:7.77px;line-height:7.77px;color:#3a0606;text-align:left;">normal</div>
<div class="c" style="left:178.7px;top:130.07999999999998px;width:78.69999999999999px;height:7.77px;line-height:7.77px;color:#061c3a;text-align:left;">left</div>
<div class="ab" style="left:0;top:136.15px;width:17px;height:0.8px;background:#e6e6e6"></div>
<div class="dd" style="left:98.6px;top:131.38px;border-top-color:#6b5a2a"></div>
<div class="dd" style="left:172.5px;top:131.38px;border-top-color:#a0403a"></div>
<div class="dd" style="left:258.2px;top:131.38px;border-top-color:#1f4f8a"></div>
<div class="c" style="left:264.4px;top:129.98px;width:160.10000000000002px;height:7.77px;line-height:7.77px;color:#ffffff;font-weight:bold;overflow:visible;">Moving</div>
<div class="c" style="left:17.0px;top:137.84999999999997px;width:80.8px;height:7.77px;line-height:7.77px;color:#2a2210;text-align:left;">mouse_right</div>
<div class="c" style="left:104.8px;top:137.84999999999997px;width:66.89999999999999px;height:7.77px;line-height:7.77px;color:#3a0606;text-align:left;">normal</div>
<div class="c" style="left:178.7px;top:137.84999999999997px;width:78.69999999999999px;height:7.77px;line-height:7.77px;color:#061c3a;text-align:left;">right</div>
<div class="ab" style="left:0;top:143.92px;width:17px;height:0.8px;background:#e6e6e6"></div>
<div class="dd" style="left:98.6px;top:139.14999999999998px;border-top-color:#6b5a2a"></div>
<div class="dd" style="left:172.5px;top:139.14999999999998px;border-top-color:#a0403a"></div>
<div class="dd" style="left:258.2px;top:139.14999999999998px;border-top-color:#1f4f8a"></div>
<div class="c" style="left:264.4px;top:137.74999999999997px;width:160.10000000000002px;height:7.77px;line-height:7.77px;color:#ffffff;font-weight:bold;overflow:visible;">Weapon(Aim,Fire, Mode,etc)</div>
<div class="c" style="left:17.0px;top:145.61999999999998px;width:80.8px;height:7.77px;line-height:7.77px;color:#2a2210;text-align:left;">mouse_up</div>
<div class="c" style="left:104.8px;top:145.61999999999998px;width:66.89999999999999px;height:7.77px;line-height:7.77px;color:#3a0606;text-align:left;">normal</div>
<div class="c" style="left:178.7px;top:145.61999999999998px;width:78.69999999999999px;height:7.77px;line-height:7.77px;color:#061c3a;text-align:left;">up</div>
<div class="ab" style="left:0;top:151.69px;width:17px;height:0.8px;background:#e6e6e6"></div>
<div class="dd" style="left:98.6px;top:146.92px;border-top-color:#6b5a2a"></div>
<div class="dd" style="left:172.5px;top:146.92px;border-top-color:#a0403a"></div>
<div class="dd" style="left:258.2px;top:146.92px;border-top-color:#1f4f8a"></div>
<div class="c" style="left:264.4px;top:145.51999999999998px;width:160.10000000000002px;height:7.77px;line-height:7.77px;color:#202020;font-weight:bold;overflow:visible;">Grenade &amp; Gadget</div>
<div class="c" style="left:17.0px;top:153.39px;width:80.8px;height:7.77px;line-height:7.77px;color:#2a2210;text-align:left;">mouse_down</div>
<div class="c" style="left:104.8px;top:153.39px;width:66.89999999999999px;height:7.77px;line-height:7.77px;color:#3a0606;text-align:left;">normal</div>
<div class="c" style="left:178.7px;top:153.39px;width:78.69999999999999px;height:7.77px;line-height:7.77px;color:#061c3a;text-align:left;">down</div>
<div class="ab" style="left:0;top:159.46px;width:17px;height:0.8px;background:#e6e6e6"></div>
<div class="dd" style="left:98.6px;top:154.69px;border-top-color:#6b5a2a"></div>
<div class="dd" style="left:172.5px;top:154.69px;border-top-color:#a0403a"></div>
<div class="dd" style="left:258.2px;top:154.69px;border-top-color:#1f4f8a"></div>
<div class="c" style="left:264.4px;top:153.29px;width:160.10000000000002px;height:7.77px;line-height:7.77px;color:#ffffff;font-weight:bold;overflow:visible;">Interact (Enter Vehicle, Spotting, etc...)</div>
<div class="c" style="left:17.0px;top:161.15999999999997px;width:80.8px;height:7.77px;line-height:7.77px;color:#2a2210;text-align:left;">dpad_N</div>
<div class="c" style="left:104.8px;top:161.15999999999997px;width:66.89999999999999px;height:7.77px;line-height:7.77px;color:#3a0606;text-align:left;">normal</div>
<div class="c" style="left:178.7px;top:161.15999999999997px;width:78.69999999999999px;height:7.77px;line-height:7.77px;color:#061c3a;text-align:left;"></div>
<div class="ab" style="left:0;top:167.23px;width:17px;height:0.8px;background:#e6e6e6"></div>
<div class="dd" style="left:98.6px;top:162.45999999999998px;border-top-color:#6b5a2a"></div>
<div class="dd" style="left:172.5px;top:162.45999999999998px;border-top-color:#a0403a"></div>
<div class="dd" style="left:258.2px;top:162.45999999999998px;border-top-color:#1f4f8a"></div>
<div class="c" style="left:264.4px;top:161.05999999999997px;width:160.10000000000002px;height:7.77px;line-height:7.77px;color:#ffffff;font-weight:bold;overflow:visible;">Escape/Enter/Stats/Tab to Windows</div>
<div class="c" style="left:17.0px;top:168.92999999999998px;width:80.8px;height:7.77px;line-height:7.77px;color:#2a2210;text-align:left;">sip_puff_threshold</div>
<div class="c" style="left:104.8px;top:168.92999999999998px;width:66.89999999999999px;height:7.77px;line-height:7.77px;color:#3a0606;text-align:left;">normal</div>
<div class="c" style="left:178.7px;top:168.92999999999998px;width:78.69999999999999px;height:7.77px;line-height:7.77px;color:#061c3a;text-align:left;">40</div>
<div class="ab" style="left:0;top:175.0px;width:17px;height:0.8px;background:#e6e6e6"></div>
<div class="dd" style="left:98.6px;top:170.23px;border-top-color:#6b5a2a"></div>
<div class="dd" style="left:172.5px;top:170.23px;border-top-color:#a0403a"></div>
<div class="dd" style="left:258.2px;top:170.23px;border-top-color:#1f4f8a"></div>
<div class="c" style="left:264.4px;top:168.82999999999998px;width:160.10000000000002px;height:7.77px;line-height:7.77px;color:#ffffff;font-weight:bold;overflow:visible;">Function Testing</div>
<div class="c" style="left:17.0px;top:176.7px;width:80.8px;height:7.77px;line-height:7.77px;color:#2a2210;text-align:left;">mouse_response_curve</div>
<div class="c" style="left:104.8px;top:176.7px;width:66.89999999999999px;height:7.77px;line-height:7.77px;color:#3a0606;text-align:left;">normal</div>
<div class="c" style="left:178.7px;top:176.7px;width:78.69999999999999px;height:7.77px;line-height:7.77px;color:#061c3a;text-align:left;">2</div>
<div class="ab" style="left:0;top:182.77px;width:17px;height:0.8px;background:#e6e6e6"></div>
<div class="dd" style="left:98.6px;top:178.0px;border-top-color:#6b5a2a"></div>
<div class="dd" style="left:172.5px;top:178.0px;border-top-color:#a0403a"></div>
<div class="dd" style="left:258.2px;top:178.0px;border-top-color:#1f4f8a"></div>
<div class="c" style="left:17.0px;top:184.46999999999997px;width:80.8px;height:7.77px;line-height:7.77px;color:#2a2210;text-align:left;">kb_d</div>
<div class="c" style="left:104.8px;top:184.46999999999997px;width:66.89999999999999px;height:7.77px;line-height:7.77px;color:#3a0606;text-align:left;">normal</div>
<div class="c" style="left:178.7px;top:184.46999999999997px;width:78.69999999999999px;height:7.77px;line-height:7.77px;color:#061c3a;text-align:left;">usb_1_right</div>
<div class="ab" style="left:0;top:190.54px;width:17px;height:0.8px;background:#e6e6e6"></div>
<div class="dd" style="left:98.6px;top:185.76999999999998px;border-top-color:#6b5a2a"></div>
<div class="dd" style="left:172.5px;top:185.76999999999998px;border-top-color:#a0403a"></div>
<div class="dd" style="left:258.2px;top:185.76999999999998px;border-top-color:#1f4f8a"></div>
<div class="c" style="left:17.0px;top:192.23999999999998px;width:80.8px;height:7.77px;line-height:7.77px;color:#2a2210;text-align:left;">kb_a</div>
<div class="c" style="left:104.8px;top:192.23999999999998px;width:66.89999999999999px;height:7.77px;line-height:7.77px;color:#3a0606;text-align:left;">normal</div>
<div class="c" style="left:178.7px;top:192.23999999999998px;width:78.69999999999999px;height:7.77px;line-height:7.77px;color:#061c3a;text-align:left;">usb_1_left</div>
<div class="ab" style="left:0;top:198.31px;width:17px;height:0.8px;background:#e6e6e6"></div>
<div class="dd" style="left:98.6px;top:193.54px;border-top-color:#6b5a2a"></div>
<div class="dd" style="left:172.5px;top:193.54px;border-top-color:#a0403a"></div>
<div class="dd" style="left:258.2px;top:193.54px;border-top-color:#1f4f8a"></div>
<div class="c" style="left:17.0px;top:200.01px;width:80.8px;height:7.77px;line-height:7.77px;color:#2a2210;text-align:left;">kb_w</div>
<div class="c" style="left:104.8px;top:200.01px;width:66.89999999999999px;height:7.77px;line-height:7.77px;color:#3a0606;text-align:left;">normal</div>
<div class="c" style="left:178.7px;top:200.01px;width:78.69999999999999px;height:7.77px;line-height:7.77px;color:#061c3a;text-align:left;">usb_1_up</div>
<div class="ab" style="left:0;top:206.08px;width:17px;height:0.8px;background:#e6e6e6"></div>
<div class="dd" style="left:98.6px;top:201.31px;border-top-color:#6b5a2a"></div>
<div class="dd" style="left:172.5px;top:201.31px;border-top-color:#a0403a"></div>
<div class="dd" style="left:258.2px;top:201.31px;border-top-color:#1f4f8a"></div>
<div class="c" style="left:17.0px;top:207.77999999999997px;width:80.8px;height:7.77px;line-height:7.77px;color:#2a2210;text-align:left;">kb_w</div>
<div class="c" style="left:104.8px;top:207.77999999999997px;width:66.89999999999999px;height:7.77px;line-height:7.77px;color:#3a0606;text-align:left;">force_off</div>
<div class="c" style="left:178.7px;top:207.77999999999997px;width:78.69999999999999px;height:7.77px;line-height:7.77px;color:#061c3a;text-align:left;">usb_1_down</div>
<div class="ab" style="left:0;top:213.85px;width:17px;height:0.8px;background:#e6e6e6"></div>
<div class="dd" style="left:98.6px;top:209.07999999999998px;border-top-color:#6b5a2a"></div>
<div class="dd" style="left:172.5px;top:209.07999999999998px;border-top-color:#a0403a"></div>
<div class="dd" style="left:258.2px;top:209.07999999999998px;border-top-color:#1f4f8a"></div>
<div class="c" style="left:17.0px;top:215.54999999999998px;width:80.8px;height:7.77px;line-height:7.77px;color:#2a2210;text-align:left;">kb_s</div>
<div class="c" style="left:104.8px;top:215.54999999999998px;width:66.89999999999999px;height:7.77px;line-height:7.77px;color:#3a0606;text-align:left;">normal</div>
<div class="c" style="left:178.7px;top:215.54999999999998px;width:78.69999999999999px;height:7.77px;line-height:7.77px;color:#061c3a;text-align:left;">usb_1_down</div>
<div class="ab" style="left:0;top:221.62px;width:17px;height:0.8px;background:#e6e6e6"></div>
<div class="dd" style="left:98.6px;top:216.85px;border-top-color:#6b5a2a"></div>
<div class="dd" style="left:172.5px;top:216.85px;border-top-color:#a0403a"></div>
<div class="dd" style="left:258.2px;top:216.85px;border-top-color:#1f4f8a"></div>
<div class="c" style="left:17.0px;top:223.32px;width:80.8px;height:7.77px;line-height:7.77px;color:#2a2210;text-align:left;">kb_d</div>
<div class="c" style="left:104.8px;top:223.32px;width:66.89999999999999px;height:7.77px;line-height:7.77px;color:#3a0606;text-align:left;">normal</div>
<div class="c" style="left:178.7px;top:223.32px;width:78.69999999999999px;height:7.77px;line-height:7.77px;color:#061c3a;text-align:left;">mp_right_center_puff</div>
<div class="ab" style="left:0;top:229.39000000000001px;width:17px;height:0.8px;background:#e6e6e6"></div>
<div class="dd" style="left:98.6px;top:224.62px;border-top-color:#6b5a2a"></div>
<div class="dd" style="left:172.5px;top:224.62px;border-top-color:#a0403a"></div>
<div class="dd" style="left:258.2px;top:224.62px;border-top-color:#1f4f8a"></div>
<div class="c" style="left:264.4px;top:223.22px;width:160.10000000000002px;height:7.77px;line-height:7.77px;color:#ff9900;font-weight:bold;overflow:visible;">Strafe right</div>
<div class="c" style="left:17.0px;top:231.08999999999997px;width:80.8px;height:7.77px;line-height:7.77px;color:#2a2210;text-align:left;">kb_a</div>
<div class="c" style="left:104.8px;top:231.08999999999997px;width:66.89999999999999px;height:7.77px;line-height:7.77px;color:#3a0606;text-align:left;">normal</div>
<div class="c" style="left:178.7px;top:231.08999999999997px;width:78.69999999999999px;height:7.77px;line-height:7.77px;color:#061c3a;text-align:left;">mp_left_center_puff</div>
<div class="ab" style="left:0;top:237.16px;width:17px;height:0.8px;background:#e6e6e6"></div>
<div class="dd" style="left:98.6px;top:232.39px;border-top-color:#6b5a2a"></div>
<div class="dd" style="left:172.5px;top:232.39px;border-top-color:#a0403a"></div>
<div class="dd" style="left:258.2px;top:232.39px;border-top-color:#1f4f8a"></div>
<div class="c" style="left:264.4px;top:230.98999999999998px;width:160.10000000000002px;height:7.77px;line-height:7.77px;color:#ff9900;font-weight:bold;overflow:visible;">Strafe left</div>
<div class="c" style="left:17.0px;top:238.85999999999996px;width:80.8px;height:7.77px;line-height:7.77px;color:#2a2210;text-align:left;">kb_w</div>
<div class="c" style="left:104.8px;top:238.85999999999996px;width:66.89999999999999px;height:7.77px;line-height:7.77px;color:#3a0606;text-align:left;">delayed_latch 250</div>
<div class="c" style="left:178.7px;top:238.85999999999996px;width:78.69999999999999px;height:7.77px;line-height:7.77px;color:#061c3a;text-align:left;">mp_triple_puff</div>
<div class="ab" style="left:0;top:244.92999999999998px;width:17px;height:0.8px;background:#e6e6e6"></div>
<div class="dd" style="left:98.6px;top:240.15999999999997px;border-top-color:#6b5a2a"></div>
<div class="dd" style="left:172.5px;top:240.15999999999997px;border-top-color:#a0403a"></div>
<div class="dd" style="left:258.2px;top:240.15999999999997px;border-top-color:#1f4f8a"></div>
<div class="c" style="left:264.4px;top:238.75999999999996px;width:160.10000000000002px;height:7.77px;line-height:7.77px;color:#ff9900;font-weight:bold;overflow:visible;">walk</div>
<div class="c" style="left:17.0px;top:246.63px;width:80.8px;height:7.77px;line-height:7.77px;color:#2a2210;text-align:left;">kb_s</div>
<div class="c" style="left:104.8px;top:246.63px;width:66.89999999999999px;height:7.77px;line-height:7.77px;color:#3a0606;text-align:left;">toggle</div>
<div class="c" style="left:178.7px;top:246.63px;width:78.69999999999999px;height:7.77px;line-height:7.77px;color:#061c3a;text-align:left;">mp_left_center_sip</div>
<div class="ab" style="left:0;top:252.70000000000002px;width:17px;height:0.8px;background:#e6e6e6"></div>
<div class="dd" style="left:98.6px;top:247.93px;border-top-color:#6b5a2a"></div>
<div class="dd" style="left:172.5px;top:247.93px;border-top-color:#a0403a"></div>
<div class="dd" style="left:258.2px;top:247.93px;border-top-color:#1f4f8a"></div>
<div class="c" style="left:264.4px;top:246.53px;width:160.10000000000002px;height:7.77px;line-height:7.77px;color:#ff9900;font-weight:bold;overflow:visible;">walking back</div>
<div class="c" style="left:17.0px;top:254.39999999999998px;width:80.8px;height:7.77px;line-height:7.77px;color:#2a2210;text-align:left;">kb_z</div>
<div class="c" style="left:104.8px;top:254.39999999999998px;width:66.89999999999999px;height:7.77px;line-height:7.77px;color:#3a0606;text-align:left;">normal</div>
<div class="c" style="left:178.7px;top:254.39999999999998px;width:78.69999999999999px;height:7.77px;line-height:7.77px;color:#061c3a;text-align:left;">mp_left_puff</div>
<div class="ab" style="left:0;top:260.46999999999997px;width:17px;height:0.8px;background:#e6e6e6"></div>
<div class="dd" style="left:98.6px;top:255.7px;border-top-color:#6b5a2a"></div>
<div class="dd" style="left:172.5px;top:255.7px;border-top-color:#a0403a"></div>
<div class="dd" style="left:258.2px;top:255.7px;border-top-color:#1f4f8a"></div>
<div class="c" style="left:264.4px;top:254.29999999999998px;width:160.10000000000002px;height:7.77px;line-height:7.77px;color:#ff9900;font-weight:bold;overflow:visible;">lean left</div>
<div class="c" style="left:17.0px;top:262.16999999999996px;width:80.8px;height:7.77px;line-height:7.77px;color:#2a2210;text-align:left;">kb_c</div>
<div class="c" style="left:104.8px;top:262.16999999999996px;width:66.89999999999999px;height:7.77px;line-height:7.77px;color:#3a0606;text-align:left;">normal</div>
<div class="c" style="left:178.7px;top:262.16999999999996px;width:78.69999999999999px;height:7.77px;line-height:7.77px;color:#061c3a;text-align:left;">mp_right_puff</div>
<div class="ab" style="left:0;top:268.23999999999995px;width:17px;height:0.8px;background:#e6e6e6"></div>
<div class="dd" style="left:98.6px;top:263.46999999999997px;border-top-color:#6b5a2a"></div>
<div class="dd" style="left:172.5px;top:263.46999999999997px;border-top-color:#a0403a"></div>
<div class="dd" style="left:258.2px;top:263.46999999999997px;border-top-color:#1f4f8a"></div>
<div class="c" style="left:264.4px;top:262.07px;width:160.10000000000002px;height:7.77px;line-height:7.77px;color:#ff9900;font-weight:bold;overflow:visible;">lean right</div>
<div class="c" style="left:17.0px;top:269.94px;width:80.8px;height:7.77px;line-height:7.77px;color:#2a2210;text-align:left;">kb_left_shift</div>
<div class="c" style="left:104.8px;top:269.94px;width:66.89999999999999px;height:7.77px;line-height:7.77px;color:#3a0606;text-align:left;">delay_on 500 16000</div>
<div class="c" style="left:178.7px;top:269.94px;width:78.69999999999999px;height:7.77px;line-height:7.77px;color:#061c3a;text-align:left;">mp_triple_puff</div>
<div class="ab" style="left:0;top:276.01px;width:17px;height:0.8px;background:#e6e6e6"></div>
<div class="dd" style="left:98.6px;top:271.24px;border-top-color:#6b5a2a"></div>
<div class="dd" style="left:172.5px;top:271.24px;border-top-color:#a0403a"></div>
<div class="dd" style="left:258.2px;top:271.24px;border-top-color:#1f4f8a"></div>
<div class="c" style="left:264.4px;top:269.84000000000003px;width:160.10000000000002px;height:7.77px;line-height:7.77px;color:#ff00ff;font-weight:bold;overflow:visible;">Sprint (Stay's Activated)</div>
<div class="c" style="left:17.0px;top:277.71px;width:80.8px;height:7.77px;line-height:7.77px;color:#2a2210;text-align:left;">kb_left_control</div>
<div class="c" style="left:104.8px;top:277.71px;width:66.89999999999999px;height:7.77px;line-height:7.77px;color:#3a0606;text-align:left;">tap 250</div>
<div class="c" style="left:178.7px;top:277.71px;width:78.69999999999999px;height:7.77px;line-height:7.77px;color:#061c3a;text-align:left;">mp_triple_sip</div>
<div class="ab" style="left:0;top:283.78px;width:17px;height:0.8px;background:#e6e6e6"></div>
<div class="dd" style="left:98.6px;top:279.01px;border-top-color:#6b5a2a"></div>
<div class="dd" style="left:172.5px;top:279.01px;border-top-color:#a0403a"></div>
<div class="dd" style="left:258.2px;top:279.01px;border-top-color:#1f4f8a"></div>
<div class="c" style="left:264.4px;top:277.61px;width:160.10000000000002px;height:7.77px;line-height:7.77px;color:#ffd966;font-weight:bold;overflow:visible;">Crouch</div>
<div class="c" style="left:17.0px;top:285.47999999999996px;width:80.8px;height:7.77px;line-height:7.77px;color:#2a2210;text-align:left;">kb_c</div>
<div class="c" style="left:104.8px;top:285.47999999999996px;width:66.89999999999999px;height:7.77px;line-height:7.77px;color:#3a0606;text-align:left;">delay_on 250</div>
<div class="c" style="left:178.7px;top:285.47999999999996px;width:78.69999999999999px;height:7.77px;line-height:7.77px;color:#061c3a;text-align:left;">mp_triple_sip</div>
<div class="ab" style="left:0;top:291.54999999999995px;width:17px;height:0.8px;background:#e6e6e6"></div>
<div class="dd" style="left:98.6px;top:286.78px;border-top-color:#6b5a2a"></div>
<div class="dd" style="left:172.5px;top:286.78px;border-top-color:#a0403a"></div>
<div class="dd" style="left:258.2px;top:286.78px;border-top-color:#1f4f8a"></div>
<div class="c" style="left:264.4px;top:285.38px;width:160.10000000000002px;height:7.77px;line-height:7.77px;color:#ffd966;font-weight:bold;overflow:visible;">Lay down</div>
<div class="c" style="left:17.0px;top:293.25px;width:80.8px;height:7.77px;line-height:7.77px;color:#2a2210;text-align:left;">kb_space</div>
<div class="c" style="left:104.8px;top:293.25px;width:66.89999999999999px;height:7.77px;line-height:7.77px;color:#3a0606;text-align:left;">normal</div>
<div class="c" style="left:178.7px;top:293.25px;width:78.69999999999999px;height:7.77px;line-height:7.77px;color:#061c3a;text-align:left;">lip</div>
<div class="ab" style="left:0;top:299.32px;width:17px;height:0.8px;background:#e6e6e6"></div>
<div class="dd" style="left:98.6px;top:294.55px;border-top-color:#6b5a2a"></div>
<div class="dd" style="left:172.5px;top:294.55px;border-top-color:#a0403a"></div>
<div class="dd" style="left:258.2px;top:294.55px;border-top-color:#1f4f8a"></div>
<div class="c" style="left:264.4px;top:293.15000000000003px;width:160.10000000000002px;height:7.77px;line-height:7.77px;color:#ffc000;font-weight:bold;overflow:visible;">Jump</div>
<div class="c" style="left:17.0px;top:301.02px;width:80.8px;height:7.77px;line-height:7.77px;color:#2a2210;text-align:left;">mouse_right_button</div>
<div class="c" style="left:104.8px;top:301.02px;width:66.89999999999999px;height:7.77px;line-height:7.77px;color:#3a0606;text-align:left;">normal</div>
<div class="c" style="left:178.7px;top:301.02px;width:78.69999999999999px;height:7.77px;line-height:7.77px;color:#061c3a;text-align:left;">mp_center_sip</div>
<div class="ab" style="left:0;top:307.09px;width:17px;height:0.8px;background:#e6e6e6"></div>
<div class="dd" style="left:98.6px;top:302.32px;border-top-color:#6b5a2a"></div>
<div class="dd" style="left:172.5px;top:302.32px;border-top-color:#a0403a"></div>
<div class="dd" style="left:258.2px;top:302.32px;border-top-color:#1f4f8a"></div>
<div class="c" style="left:264.4px;top:300.92px;width:160.10000000000002px;height:7.77px;line-height:7.77px;color:#fce5cd;font-weight:bold;overflow:visible;">Aim (Hold to Crouch)</div>
<div class="c" style="left:17.0px;top:308.78999999999996px;width:80.8px;height:7.77px;line-height:7.77px;color:#2a2210;text-align:left;">mouse_left_button</div>
<div class="c" style="left:104.8px;top:308.78999999999996px;width:66.89999999999999px;height:7.77px;line-height:7.77px;color:#3a0606;text-align:left;">normal</div>
<div class="c" style="left:178.7px;top:308.78999999999996px;width:78.69999999999999px;height:7.77px;line-height:7.77px;color:#061c3a;text-align:left;">mp_center_puff</div>
<div class="ab" style="left:0;top:314.85999999999996px;width:17px;height:0.8px;background:#e6e6e6"></div>
<div class="dd" style="left:98.6px;top:310.09px;border-top-color:#6b5a2a"></div>
<div class="dd" style="left:172.5px;top:310.09px;border-top-color:#a0403a"></div>
<div class="dd" style="left:258.2px;top:310.09px;border-top-color:#1f4f8a"></div>
<div class="c" style="left:264.4px;top:308.69px;width:160.10000000000002px;height:7.77px;line-height:7.77px;color:#fce5cd;font-weight:bold;overflow:visible;">Fire</div>
<div class="c" style="left:17.0px;top:316.56px;width:80.8px;height:7.77px;line-height:7.77px;color:#2a2210;text-align:left;">kb_3</div>
<div class="c" style="left:104.8px;top:316.56px;width:66.89999999999999px;height:7.77px;line-height:7.77px;color:#3a0606;text-align:left;">delay_on 250</div>
<div class="c" style="left:178.7px;top:316.56px;width:78.69999999999999px;height:7.77px;line-height:7.77px;color:#061c3a;text-align:left;">mp_left_center_sip_soft</div>
<div class="ab" style="left:0;top:322.63px;width:17px;height:0.8px;background:#e6e6e6"></div>
<div class="dd" style="left:98.6px;top:317.86px;border-top-color:#6b5a2a"></div>
<div class="dd" style="left:172.5px;top:317.86px;border-top-color:#a0403a"></div>
<div class="dd" style="left:258.2px;top:317.86px;border-top-color:#1f4f8a"></div>
<div class="c" style="left:264.4px;top:316.46000000000004px;width:160.10000000000002px;height:7.77px;line-height:7.77px;color:#9fbff5;font-weight:bold;overflow:visible;">Consumables</div>
<div class="c" style="left:17.0px;top:324.33px;width:80.8px;height:7.77px;line-height:7.77px;color:#2a2210;text-align:left;">kb_r</div>
<div class="c" style="left:104.8px;top:324.33px;width:66.89999999999999px;height:7.77px;line-height:7.77px;color:#3a0606;text-align:left;">normal</div>
<div class="c" style="left:178.7px;top:324.33px;width:78.69999999999999px;height:7.77px;line-height:7.77px;color:#061c3a;text-align:left;">mp_right_sip_soft</div>
<div class="ab" style="left:0;top:330.4px;width:17px;height:0.8px;background:#e6e6e6"></div>
<div class="dd" style="left:98.6px;top:325.63px;border-top-color:#6b5a2a"></div>
<div class="dd" style="left:172.5px;top:325.63px;border-top-color:#a0403a"></div>
<div class="dd" style="left:258.2px;top:325.63px;border-top-color:#1f4f8a"></div>
<div class="c" style="left:264.4px;top:324.23px;width:160.10000000000002px;height:7.77px;line-height:7.77px;color:#9fbff5;font-weight:bold;overflow:visible;">Reload</div>
<div class="c" style="left:17.0px;top:332.09999999999997px;width:80.8px;height:7.77px;line-height:7.77px;color:#2a2210;text-align:left;">kb_r</div>
<div class="c" style="left:104.8px;top:332.09999999999997px;width:66.89999999999999px;height:7.77px;line-height:7.77px;color:#3a0606;text-align:left;">tap 250</div>
<div class="c" style="left:178.7px;top:332.09999999999997px;width:78.69999999999999px;height:7.77px;line-height:7.77px;color:#061c3a;text-align:left;">mp_left_center_puff_soft</div>
<div class="ab" style="left:0;top:338.16999999999996px;width:17px;height:0.8px;background:#e6e6e6"></div>
<div class="dd" style="left:98.6px;top:333.4px;border-top-color:#6b5a2a"></div>
<div class="dd" style="left:172.5px;top:333.4px;border-top-color:#a0403a"></div>
<div class="dd" style="left:258.2px;top:333.4px;border-top-color:#1f4f8a"></div>
<div class="c" style="left:264.4px;top:332.0px;width:160.10000000000002px;height:7.77px;line-height:7.77px;color:#8fb3f5;font-weight:bold;overflow:visible;">push</div>
<div class="c" style="left:17.0px;top:339.86999999999995px;width:80.8px;height:7.77px;line-height:7.77px;color:#2a2210;text-align:left;">kb_t</div>
<div class="c" style="left:104.8px;top:339.86999999999995px;width:66.89999999999999px;height:7.77px;line-height:7.77px;color:#3a0606;text-align:left;">normal</div>
<div class="c" style="left:178.7px;top:339.86999999999995px;width:78.69999999999999px;height:7.77px;line-height:7.77px;color:#061c3a;text-align:left;">mp_triple_sip_soft</div>
<div class="ab" style="left:0;top:345.93999999999994px;width:17px;height:0.8px;background:#e6e6e6"></div>
<div class="dd" style="left:98.6px;top:341.16999999999996px;border-top-color:#6b5a2a"></div>
<div class="dd" style="left:172.5px;top:341.16999999999996px;border-top-color:#a0403a"></div>
<div class="dd" style="left:258.2px;top:341.16999999999996px;border-top-color:#1f4f8a"></div>
<div class="c" style="left:264.4px;top:339.77px;width:160.10000000000002px;height:7.77px;line-height:7.77px;color:#f4cccc;font-weight:bold;overflow:visible;">Change weapons</div>
<div class="c" style="left:17.0px;top:347.64px;width:80.8px;height:7.77px;line-height:7.77px;color:#2a2210;text-align:left;">kb_v</div>
<div class="c" style="left:104.8px;top:347.64px;width:66.89999999999999px;height:7.77px;line-height:7.77px;color:#3a0606;text-align:left;">normal</div>
<div class="c" style="left:178.7px;top:347.64px;width:78.69999999999999px;height:7.77px;line-height:7.77px;color:#061c3a;text-align:left;">mp_right_center_sip_soft</div>
<div class="ab" style="left:0;top:353.71px;width:17px;height:0.8px;background:#e6e6e6"></div>
<div class="dd" style="left:98.6px;top:348.94px;border-top-color:#6b5a2a"></div>
<div class="dd" style="left:172.5px;top:348.94px;border-top-color:#a0403a"></div>
<div class="dd" style="left:258.2px;top:348.94px;border-top-color:#1f4f8a"></div>
<div class="c" style="left:264.4px;top:347.54px;width:160.10000000000002px;height:7.77px;line-height:7.77px;color:#660000;font-weight:bold;overflow:visible;">Block</div>
<div class="c" style="left:17.0px;top:355.40999999999997px;width:80.8px;height:7.77px;line-height:7.77px;color:#2a2210;text-align:left;">kb_f</div>
<div class="c" style="left:104.8px;top:355.40999999999997px;width:66.89999999999999px;height:7.77px;line-height:7.77px;color:#3a0606;text-align:left;">normal</div>
<div class="c" style="left:178.7px;top:355.40999999999997px;width:78.69999999999999px;height:7.77px;line-height:7.77px;color:#061c3a;text-align:left;">mp_center_sip_soft</div>
<div class="ab" style="left:0;top:361.47999999999996px;width:17px;height:0.8px;background:#e6e6e6"></div>
<div class="dd" style="left:98.6px;top:356.71px;border-top-color:#6b5a2a"></div>
<div class="dd" style="left:172.5px;top:356.71px;border-top-color:#a0403a"></div>
<div class="dd" style="left:258.2px;top:356.71px;border-top-color:#1f4f8a"></div>
<div class="c" style="left:264.4px;top:355.31px;width:160.10000000000002px;height:7.77px;line-height:7.77px;color:#6aa84f;font-weight:bold;overflow:visible;">whip</div>
<div class="c" style="left:17.0px;top:363.18px;width:80.8px;height:7.77px;line-height:7.77px;color:#2a2210;text-align:left;">kb_2</div>
<div class="c" style="left:104.8px;top:363.18px;width:66.89999999999999px;height:7.77px;line-height:7.77px;color:#3a0606;text-align:left;">normal</div>
<div class="c" style="left:178.7px;top:363.18px;width:78.69999999999999px;height:7.77px;line-height:7.77px;color:#061c3a;text-align:left;">mp_left_sip</div>
<div class="ab" style="left:0;top:369.25px;width:17px;height:0.8px;background:#e6e6e6"></div>
<div class="dd" style="left:98.6px;top:364.48px;border-top-color:#6b5a2a"></div>
<div class="dd" style="left:172.5px;top:364.48px;border-top-color:#a0403a"></div>
<div class="dd" style="left:258.2px;top:364.48px;border-top-color:#1f4f8a"></div>
<div class="c" style="left:264.4px;top:363.08000000000004px;width:160.10000000000002px;height:7.77px;line-height:7.77px;color:#1f2f78;font-weight:bold;overflow:visible;">Key Tools</div>
<div class="c" style="left:17.0px;top:370.95px;width:80.8px;height:7.77px;line-height:7.77px;color:#2a2210;text-align:left;">kb_q</div>
<div class="c" style="left:104.8px;top:370.95px;width:66.89999999999999px;height:7.77px;line-height:7.77px;color:#3a0606;text-align:left;">delay_on 250</div>
<div class="c" style="left:178.7px;top:370.95px;width:78.69999999999999px;height:7.77px;line-height:7.77px;color:#061c3a;text-align:left;">mp_left_center_puff_soft</div>
<div class="ab" style="left:0;top:377.02px;width:17px;height:0.8px;background:#e6e6e6"></div>
<div class="dd" style="left:98.6px;top:372.25px;border-top-color:#6b5a2a"></div>
<div class="dd" style="left:172.5px;top:372.25px;border-top-color:#a0403a"></div>
<div class="dd" style="left:258.2px;top:372.25px;border-top-color:#1f4f8a"></div>
<div class="c" style="left:264.4px;top:370.85px;width:160.10000000000002px;height:7.77px;line-height:7.77px;color:#1f2f78;font-weight:bold;overflow:visible;">Drop</div>
<div class="c" style="left:17.0px;top:378.71999999999997px;width:80.8px;height:7.77px;line-height:7.77px;color:#2a2210;text-align:left;">kb_e</div>
<div class="c" style="left:104.8px;top:378.71999999999997px;width:66.89999999999999px;height:7.77px;line-height:7.77px;color:#3a0606;text-align:left;">normal</div>
<div class="c" style="left:178.7px;top:378.71999999999997px;width:78.69999999999999px;height:7.77px;line-height:7.77px;color:#061c3a;text-align:left;">mp_right_center_sip</div>
<div class="ab" style="left:0;top:384.78999999999996px;width:17px;height:0.8px;background:#e6e6e6"></div>
<div class="dd" style="left:98.6px;top:380.02px;border-top-color:#6b5a2a"></div>
<div class="dd" style="left:172.5px;top:380.02px;border-top-color:#a0403a"></div>
<div class="dd" style="left:258.2px;top:380.02px;border-top-color:#1f4f8a"></div>
<div class="c" style="left:264.4px;top:378.62px;width:160.10000000000002px;height:7.77px;line-height:7.77px;color:#ffffff;font-weight:bold;overflow:visible;">interact/enter</div>
<div class="c" style="left:17.0px;top:386.49px;width:80.8px;height:7.77px;line-height:7.77px;color:#2a2210;text-align:left;">kb_tab</div>
<div class="c" style="left:104.8px;top:386.49px;width:66.89999999999999px;height:7.77px;line-height:7.77px;color:#3a0606;text-align:left;">delay_on 100</div>
<div class="c" style="left:178.7px;top:386.49px;width:78.69999999999999px;height:7.77px;line-height:7.77px;color:#061c3a;text-align:left;">mp_triple_puff_soft</div>
<div class="ab" style="left:0;top:392.56px;width:17px;height:0.8px;background:#e6e6e6"></div>
<div class="dd" style="left:98.6px;top:387.79px;border-top-color:#6b5a2a"></div>
<div class="dd" style="left:172.5px;top:387.79px;border-top-color:#a0403a"></div>
<div class="dd" style="left:258.2px;top:387.79px;border-top-color:#1f4f8a"></div>
<div class="c" style="left:264.4px;top:386.39000000000004px;width:160.10000000000002px;height:7.77px;line-height:7.77px;color:#ffffff;font-weight:bold;overflow:visible;">Inventory</div>
<div class="c" style="left:17.0px;top:394.26px;width:80.8px;height:7.77px;line-height:7.77px;color:#2a2210;text-align:left;">kb_escape</div>
<div class="c" style="left:104.8px;top:394.26px;width:66.89999999999999px;height:7.77px;line-height:7.77px;color:#3a0606;text-align:left;">delay_on 100</div>
<div class="c" style="left:178.7px;top:394.26px;width:78.69999999999999px;height:7.77px;line-height:7.77px;color:#061c3a;text-align:left;">mp_left_puff_soft</div>
<div class="ab" style="left:0;top:400.33px;width:17px;height:0.8px;background:#e6e6e6"></div>
<div class="dd" style="left:98.6px;top:395.56px;border-top-color:#6b5a2a"></div>
<div class="dd" style="left:172.5px;top:395.56px;border-top-color:#a0403a"></div>
<div class="dd" style="left:258.2px;top:395.56px;border-top-color:#1f4f8a"></div>
<div class="c" style="left:264.4px;top:394.16px;width:160.10000000000002px;height:7.77px;line-height:7.77px;color:#ffffff;font-weight:bold;overflow:visible;">Menu/Pause</div>
<div class="c" style="left:17.0px;top:402.03px;width:80.8px;height:7.77px;line-height:7.77px;color:#2a2210;text-align:left;">kb_j</div>
<div class="c" style="left:104.8px;top:402.03px;width:66.89999999999999px;height:7.77px;line-height:7.77px;color:#3a0606;text-align:left;">tap 250</div>
<div class="c" style="left:178.7px;top:402.03px;width:78.69999999999999px;height:7.77px;line-height:7.77px;color:#061c3a;text-align:left;">mp_left_center_sip_soft</div>
<div class="ab" style="left:0;top:408.09999999999997px;width:17px;height:0.8px;background:#e6e6e6"></div>
<div class="dd" style="left:98.6px;top:403.33px;border-top-color:#6b5a2a"></div>
<div class="dd" style="left:172.5px;top:403.33px;border-top-color:#a0403a"></div>
<div class="dd" style="left:258.2px;top:403.33px;border-top-color:#1f4f8a"></div>
<div class="c" style="left:264.4px;top:401.93px;width:160.10000000000002px;height:7.77px;line-height:7.77px;color:#ffffff;font-weight:bold;overflow:visible;">Journal</div>
<div class="c" style="left:17.0px;top:409.79999999999995px;width:80.8px;height:7.77px;line-height:7.77px;color:#2a2210;text-align:left;">kb_grave_accent_and_tilde</div>
<div class="c" style="left:104.8px;top:409.79999999999995px;width:66.89999999999999px;height:7.77px;line-height:7.77px;color:#3a0606;text-align:left;">delay_on 100</div>
<div class="c" style="left:178.7px;top:409.79999999999995px;width:78.69999999999999px;height:7.77px;line-height:7.77px;color:#061c3a;text-align:left;">mp_right_puff_soft</div>
<div class="ab" style="left:0;top:415.86999999999995px;width:17px;height:0.8px;background:#e6e6e6"></div>
<div class="dd" style="left:98.6px;top:411.09999999999997px;border-top-color:#6b5a2a"></div>
<div class="dd" style="left:172.5px;top:411.09999999999997px;border-top-color:#a0403a"></div>
<div class="dd" style="left:258.2px;top:411.09999999999997px;border-top-color:#1f4f8a"></div>
<div class="c" style="left:17.0px;top:417.57px;width:80.8px;height:7.77px;line-height:7.77px;color:#2a2210;text-align:left;">kb_left_shift</div>
<div class="c" style="left:104.8px;top:417.57px;width:66.89999999999999px;height:7.77px;line-height:7.77px;color:#3a0606;text-align:left;">delay_on 100</div>
<div class="c" style="left:178.7px;top:417.57px;width:78.69999999999999px;height:7.77px;line-height:7.77px;color:#061c3a;text-align:left;">mp_right_puff_soft</div>
<div class="ab" style="left:0;top:423.64px;width:17px;height:0.8px;background:#e6e6e6"></div>
<div class="dd" style="left:98.6px;top:418.87px;border-top-color:#6b5a2a"></div>
<div class="dd" style="left:172.5px;top:418.87px;border-top-color:#a0403a"></div>
<div class="dd" style="left:258.2px;top:418.87px;border-top-color:#1f4f8a"></div>
<div class="c" style="left:17.0px;top:425.34px;width:80.8px;height:7.77px;line-height:7.77px;color:#2a2210;text-align:left;">kb_left_alt</div>
<div class="c" style="left:104.8px;top:425.34px;width:66.89999999999999px;height:7.77px;line-height:7.77px;color:#3a0606;text-align:left;">delay_on 500</div>
<div class="c" style="left:178.7px;top:425.34px;width:78.69999999999999px;height:7.77px;line-height:7.77px;color:#061c3a;text-align:left;">right_puff</div>
<div class="ab" style="left:0;top:431.40999999999997px;width:17px;height:0.8px;background:#e6e6e6"></div>
<div class="dd" style="left:98.6px;top:426.64px;border-top-color:#6b5a2a"></div>
<div class="dd" style="left:172.5px;top:426.64px;border-top-color:#a0403a"></div>
<div class="dd" style="left:258.2px;top:426.64px;border-top-color:#1f4f8a"></div>
<div class="c" style="left:264.4px;top:425.24px;width:160.10000000000002px;height:7.77px;line-height:7.77px;color:#ffffff;font-weight:bold;overflow:visible;">Hold to Tab to Windows</div>
<div class="c" style="left:17.0px;top:433.10999999999996px;width:80.8px;height:7.77px;line-height:7.77px;color:#2a2210;text-align:left;">kb_tab</div>
<div class="c" style="left:104.8px;top:433.10999999999996px;width:66.89999999999999px;height:7.77px;line-height:7.77px;color:#3a0606;text-align:left;">delay_on 500</div>
<div class="c" style="left:178.7px;top:433.10999999999996px;width:78.69999999999999px;height:7.77px;line-height:7.77px;color:#061c3a;text-align:left;">right_puff</div>
<div class="ab" style="left:0;top:439.17999999999995px;width:17px;height:0.8px;background:#e6e6e6"></div>
<div class="dd" style="left:98.6px;top:434.40999999999997px;border-top-color:#6b5a2a"></div>
<div class="dd" style="left:172.5px;top:434.40999999999997px;border-top-color:#a0403a"></div>
<div class="dd" style="left:258.2px;top:434.40999999999997px;border-top-color:#1f4f8a"></div>
<div class="c" style="left:17.0px;top:440.88px;width:80.8px;height:7.77px;line-height:7.77px;color:#2a2210;text-align:left;">decrement_mode</div>
<div class="c" style="left:104.8px;top:440.88px;width:66.89999999999999px;height:7.77px;line-height:7.77px;color:#3a0606;text-align:left;">tap 250</div>
<div class="c" style="left:178.7px;top:440.88px;width:78.69999999999999px;height:7.77px;line-height:7.77px;color:#061c3a;text-align:left;">mp_right_center_puff_soft</div>
<div class="ab" style="left:0;top:446.95px;width:17px;height:0.8px;background:#e6e6e6"></div>
<div class="dd" style="left:98.6px;top:442.18px;border-top-color:#6b5a2a"></div>
<div class="dd" style="left:172.5px;top:442.18px;border-top-color:#a0403a"></div>
<div class="dd" style="left:258.2px;top:442.18px;border-top-color:#1f4f8a"></div>
<div class="c" style="left:17.0px;top:448.65px;width:80.8px;height:7.77px;line-height:7.77px;color:#2a2210;text-align:left;">increment_mode</div>
<div class="c" style="left:104.8px;top:448.65px;width:66.89999999999999px;height:7.77px;line-height:7.77px;color:#3a0606;text-align:left;">delay_on 250</div>
<div class="c" style="left:178.7px;top:448.65px;width:78.69999999999999px;height:7.77px;line-height:7.77px;color:#061c3a;text-align:left;">mp_right_center_puff_soft</div>
<div class="ab" style="left:0;top:454.71999999999997px;width:17px;height:0.8px;background:#e6e6e6"></div>
<div class="dd" style="left:98.6px;top:449.95px;border-top-color:#6b5a2a"></div>
<div class="dd" style="left:172.5px;top:449.95px;border-top-color:#a0403a"></div>
<div class="dd" style="left:258.2px;top:449.95px;border-top-color:#1f4f8a"></div>
<div class="c" style="left:264.4px;top:448.55px;width:160.10000000000002px;height:7.77px;line-height:7.77px;color:#274e13;font-weight:bold;overflow:visible;">Fightmode</div>
<div class="c" style="left:17.0px;top:456.41999999999996px;width:80.8px;height:7.77px;line-height:7.77px;color:#2a2210;text-align:left;">kb_0</div>
<div class="c" style="left:104.8px;top:456.41999999999996px;width:66.89999999999999px;height:7.77px;line-height:7.77px;color:#3a0606;text-align:left;">tap 250</div>
<div class="c" style="left:178.7px;top:456.41999999999996px;width:78.69999999999999px;height:7.77px;line-height:7.77px;color:#061c3a;text-align:left;">right_puff_soft</div>
<div class="ab" style="left:0;top:462.48999999999995px;width:17px;height:0.8px;background:#e6e6e6"></div>
<div class="dd" style="left:98.6px;top:457.71999999999997px;border-top-color:#6b5a2a"></div>
<div class="dd" style="left:172.5px;top:457.71999999999997px;border-top-color:#a0403a"></div>
<div class="dd" style="left:258.2px;top:457.71999999999997px;border-top-color:#1f4f8a"></div>
<div class="ab" style="left:102.2px;top:393.06px;width:0;height:0;border-top:2.6px solid #111;border-left:2.6px solid transparent"></div>
<div class="ab" style="left:102.2px;top:424.14px;width:0;height:0;border-top:2.6px solid #111;border-left:2.6px solid transparent"></div>
<div class="ab" style="left:17.0px;top:105.32px;width:247.39999999999998px;height:0.5px;background:rgba(0,0,0,0.0)"></div>
<div class="ab" style="left:17.0px;top:113.09px;width:247.39999999999998px;height:0.5px;background:rgba(0,0,0,0.0)"></div>
<div class="ab" style="left:17.0px;top:120.86px;width:247.39999999999998px;height:0.5px;background:rgba(0,0,0,0.0)"></div>
<div class="ab" style="left:17.0px;top:128.63px;width:247.39999999999998px;height:0.5px;background:rgba(0,0,0,0.0)"></div>
<div class="ab" style="left:17.0px;top:136.39999999999998px;width:247.39999999999998px;height:0.5px;background:rgba(0,0,0,0.0)"></div>
<div class="ab" style="left:17.0px;top:144.17px;width:247.39999999999998px;height:0.5px;background:rgba(0,0,0,0.0)"></div>
<div class="ab" style="left:17.0px;top:151.94px;width:247.39999999999998px;height:0.5px;background:rgba(0,0,0,0.0)"></div>
<div class="ab" style="left:17.0px;top:159.70999999999998px;width:247.39999999999998px;height:0.5px;background:rgba(0,0,0,0.0)"></div>
<div class="ab" style="left:17.0px;top:167.48px;width:247.39999999999998px;height:0.5px;background:rgba(0,0,0,0.0)"></div>
<div class="ab" style="left:17.0px;top:175.25px;width:247.39999999999998px;height:0.5px;background:rgba(0,0,0,0.0)"></div>
<div class="ab" style="left:17.0px;top:183.01999999999998px;width:247.39999999999998px;height:0.5px;background:rgba(0,0,0,0.0)"></div>
<div class="ab" style="left:17.0px;top:190.79px;width:247.39999999999998px;height:0.5px;background:rgba(0,0,0,0.0)"></div>
<div class="ab" style="left:17.0px;top:198.56px;width:247.39999999999998px;height:0.5px;background:rgba(0,0,0,0.0)"></div>
<div class="ab" style="left:17.0px;top:206.32999999999998px;width:247.39999999999998px;height:0.5px;background:rgba(0,0,0,0.0)"></div>
<div class="ab" style="left:17.0px;top:214.1px;width:247.39999999999998px;height:0.5px;background:rgba(0,0,0,0.0)"></div>
<div class="ab" style="left:17.0px;top:221.87px;width:247.39999999999998px;height:0.5px;background:rgba(0,0,0,0.0)"></div>
<div class="ab" style="left:17.0px;top:229.64px;width:247.39999999999998px;height:0.5px;background:rgba(0,0,0,0.0)"></div>
<div class="ab" style="left:17.0px;top:237.40999999999997px;width:247.39999999999998px;height:0.5px;background:rgba(0,0,0,0.0)"></div>
<div class="ab" style="left:17.0px;top:245.18px;width:247.39999999999998px;height:0.5px;background:rgba(0,0,0,0.0)"></div>
<div class="ab" style="left:17.0px;top:252.95px;width:247.39999999999998px;height:0.5px;background:rgba(0,0,0,0.0)"></div>
<div class="ab" style="left:17.0px;top:260.71999999999997px;width:247.39999999999998px;height:0.5px;background:rgba(0,0,0,0.0)"></div>
<div class="ab" style="left:17.0px;top:268.49px;width:247.39999999999998px;height:0.5px;background:rgba(0,0,0,0.0)"></div>
<div class="ab" style="left:17.0px;top:276.26px;width:247.39999999999998px;height:0.5px;background:rgba(0,0,0,0.0)"></div>
<div class="ab" style="left:17.0px;top:284.03px;width:247.39999999999998px;height:0.5px;background:rgba(0,0,0,0.0)"></div>
<div class="ab" style="left:17.0px;top:291.8px;width:247.39999999999998px;height:0.5px;background:rgba(0,0,0,0.0)"></div>
<div class="ab" style="left:17.0px;top:299.57px;width:247.39999999999998px;height:0.5px;background:rgba(0,0,0,0.0)"></div>
<div class="ab" style="left:17.0px;top:307.34px;width:247.39999999999998px;height:0.5px;background:rgba(0,0,0,0.0)"></div>
<div class="ab" style="left:17.0px;top:315.11px;width:247.39999999999998px;height:0.5px;background:rgba(0,0,0,0.0)"></div>
<div class="ab" style="left:17.0px;top:322.88px;width:247.39999999999998px;height:0.5px;background:rgba(0,0,0,0.0)"></div>
<div class="ab" style="left:17.0px;top:330.65px;width:247.39999999999998px;height:0.5px;background:rgba(0,0,0,0.0)"></div>
<div class="ab" style="left:17.0px;top:338.41999999999996px;width:247.39999999999998px;height:0.5px;background:rgba(0,0,0,0.0)"></div>
<div class="ab" style="left:17.0px;top:346.19px;width:247.39999999999998px;height:0.5px;background:rgba(0,0,0,0.0)"></div>
<div class="ab" style="left:17.0px;top:353.96px;width:247.39999999999998px;height:0.5px;background:rgba(0,0,0,0.0)"></div>
<div class="ab" style="left:17.0px;top:361.73px;width:247.39999999999998px;height:0.5px;background:rgba(0,0,0,0.0)"></div>
<div class="ab" style="left:17.0px;top:369.5px;width:247.39999999999998px;height:0.5px;background:rgba(0,0,0,0.0)"></div>
<div class="ab" style="left:17.0px;top:377.27px;width:247.39999999999998px;height:0.5px;background:rgba(0,0,0,0.0)"></div>
<div class="ab" style="left:17.0px;top:385.04px;width:247.39999999999998px;height:0.5px;background:rgba(0,0,0,0.0)"></div>
<div class="ab" style="left:17.0px;top:392.81px;width:247.39999999999998px;height:0.5px;background:rgba(0,0,0,0.0)"></div>
<div class="ab" style="left:17.0px;top:400.58px;width:247.39999999999998px;height:0.5px;background:rgba(0,0,0,0.0)"></div>
<div class="ab" style="left:17.0px;top:408.34999999999997px;width:247.39999999999998px;height:0.5px;background:rgba(0,0,0,0.0)"></div>
<div class="ab" style="left:17.0px;top:416.12px;width:247.39999999999998px;height:0.5px;background:rgba(0,0,0,0.0)"></div>
<div class="ab" style="left:17.0px;top:423.89px;width:247.39999999999998px;height:0.5px;background:rgba(0,0,0,0.0)"></div>
<div class="ab" style="left:17.0px;top:431.65999999999997px;width:247.39999999999998px;height:0.5px;background:rgba(0,0,0,0.0)"></div>
<div class="ab" style="left:17.0px;top:439.43px;width:247.39999999999998px;height:0.5px;background:rgba(0,0,0,0.0)"></div>
<div class="ab" style="left:17.0px;top:447.2px;width:247.39999999999998px;height:0.5px;background:rgba(0,0,0,0.0)"></div>
<div class="ab" style="left:17.0px;top:454.96999999999997px;width:247.39999999999998px;height:0.5px;background:rgba(0,0,0,0.0)"></div>
<div class="ab" style="left:17.0px;top:462.74px;width:247.39999999999998px;height:0.5px;background:rgba(0,0,0,0.0)"></div>
<div class="ab" style="left:104.55px;top:97.8px;width:0.5px;height:370px;background:rgba(0,0,0,0.05)"></div>
<div class="ab" style="left:178.45px;top:97.8px;width:0.5px;height:370px;background:rgba(0,0,0,0.05)"></div>
<div class="ab" style="left:264.15px;top:97.8px;width:0.5px;height:370px;background:rgba(0,0,0,0.05)"></div>
<div class="ab" style="left:424.25px;top:97.8px;width:0.5px;height:370px;background:rgba(0,0,0,0.05)"></div>
<div class="ab" style="left:424.5px;top:97.8px;width:215.5px;height:364.2px;background:#c9daf8"></div>
<div class="ab" style="left:425.2px;top:95.2px;width:205.6px;height:361.8px;overflow:hidden;background:#060505">
<div class="ab" style="left:0;top:0;width:206px;height:362px;background:radial-gradient(ellipse 50px 30px at 185px 8px,rgba(140,140,140,0.5),rgba(0,0,0,0) 100%),radial-gradient(ellipse 30px 70px at 208px 50px,rgba(140,140,140,0.4),rgba(0,0,0,0) 100%),radial-gradient(ellipse 40px 110px at 195px 110px,rgba(130,130,130,0.38),rgba(0,0,0,0) 100%),radial-gradient(ellipse 55px 75px at 190px 240px,rgba(140,140,140,0.55),rgba(0,0,0,0) 100%),radial-gradient(ellipse 40px 40px at 150px 150px,rgba(90,90,90,0.18),rgba(0,0,0,0) 100%),radial-gradient(ellipse 25px 50px at 198px 320px,rgba(100,100,100,0.2),rgba(0,0,0,0) 100%),radial-gradient(ellipse 30px 20px at 130px 40px,rgba(90,90,90,0.2),rgba(0,0,0,0) 100%)"></div>
<div class="ab" style="left:8.8px;top:3.9px;font-size:6.3px;line-height:7px;color:#e4e0d6;white-space:nowrap;letter-spacing:0px">MOUSE &amp; KEYBOARD</div>
<div class="ab" style="left:8.8px;top:11.3px;font-size:14.3px;line-height:15px;color:#eeeae0;white-space:nowrap;transform:scaleX(0.915);transform-origin:0 0">KEY BINDINGS</div>
<div class="ab" style="left:0;top:28.8px;width:206px;height:0.6px;background:rgba(160,150,130,0.35)"></div>
<div class="ab" style="left:8.199999999999989px;top:36.50000000000001px;width:188.60000000000002px;height:14.2px;border-radius:1.5px;background:linear-gradient(90deg,rgba(10,10,10,0.55) 0%,rgba(10,10,10,0) 45%,rgba(10,10,10,0) 70%,rgba(10,10,10,0.6) 100%),linear-gradient(180deg,#1c1a17 0%,#2e271c 45%,#5a4628 80%,#7a5e34 100%);border:0.6px solid #a09a8c"></div>
<div class="kl" style="left:12.199999999999989px;top:36.50000000000001px">Move Forward</div>
<div class="ab" style="left:127.09999999999997px;top:38.10000000000001px;width:29.6px;height:10.8px;border-radius:1.2px;background:#c7bfa8"></div>
<div class="ab" style="left:138.89999999999998px;top:40.00000000000001px;width:6.4px;height:7px;border:0.6px solid #2a2724;border-radius:0.6px;background:#1e1c19;color:#eee;font-size:4.6px;line-height:5.8px;text-align:center;font-weight:bold">W</div>
<div class="sepv" style="left:160.09999999999997px;top:38.300000000000004px"></div>
<div class="ab" style="left:8.199999999999989px;top:54.07999999999999px;width:188.60000000000002px;height:14.2px;border-radius:1.5px;background:linear-gradient(90deg,rgba(24,21,19,0.7) 0%,rgba(24,21,19,0.6) 60%,rgba(24,21,19,0.35) 100%)"></div>
<div class="kl" style="left:12.199999999999989px;top:54.07999999999999px">Move Backward</div>
<div class="kk" style="left:138.49999999999997px;top:57.67999999999999px;width:7.2px">S</div>
<div class="sepv" style="left:160.09999999999997px;top:55.87999999999999px"></div>
<div class="ab" style="left:8.199999999999989px;top:71.66000000000001px;width:188.60000000000002px;height:14.2px;border-radius:1.5px;background:linear-gradient(90deg,rgba(24,21,19,0.7) 0%,rgba(24,21,19,0.6) 60%,rgba(24,21,19,0.35) 100%)"></div>
<div class="kl" style="left:12.199999999999989px;top:71.66000000000001px">Strafe Left</div>
<div class="kk" style="left:138.49999999999997px;top:75.26px;width:7.2px">A</div>
<div class="sepv" style="left:160.09999999999997px;top:73.46000000000001px"></div>
<div class="ab" style="left:8.199999999999989px;top:89.24000000000002px;width:188.60000000000002px;height:14.2px;border-radius:1.5px;background:linear-gradient(90deg,rgba(24,21,19,0.7) 0%,rgba(24,21,19,0.6) 60%,rgba(24,21,19,0.35) 100%)"></div>
<div class="kl" style="left:12.199999999999989px;top:89.24000000000002px">Strafe Right</div>
<div class="kk" style="left:138.49999999999997px;top:92.84000000000002px;width:7.2px">D</div>
<div class="sepv" style="left:160.09999999999997px;top:91.04000000000002px"></div>
<div class="ab" style="left:8.199999999999989px;top:106.82000000000001px;width:188.60000000000002px;height:14.2px;border-radius:1.5px;background:linear-gradient(90deg,rgba(24,21,19,0.7) 0%,rgba(24,21,19,0.6) 60%,rgba(24,21,19,0.35) 100%)"></div>
<div class="kl" style="left:12.199999999999989px;top:106.82000000000001px">Lean Left</div>
<div class="kk" style="left:138.49999999999997px;top:110.42px;width:7.2px">Y</div>
<div class="sepv" style="left:160.09999999999997px;top:108.62px"></div>
<div class="ab" style="left:8.199999999999989px;top:124.4px;width:188.60000000000002px;height:14.2px;border-radius:1.5px;background:linear-gradient(90deg,rgba(24,21,19,0.7) 0%,rgba(24,21,19,0.6) 60%,rgba(24,21,19,0.35) 100%)"></div>
<div class="kl" style="left:12.199999999999989px;top:124.4px">Lean Right</div>
<div class="kk" style="left:138.49999999999997px;top:128.0px;width:7.2px">C</div>
<div class="sepv" style="left:160.09999999999997px;top:126.2px"></div>
<div class="ab" style="left:8.199999999999989px;top:141.98px;width:188.60000000000002px;height:14.2px;border-radius:1.5px;background:linear-gradient(90deg,rgba(24,21,19,0.7) 0%,rgba(24,21,19,0.6) 60%,rgba(24,21,19,0.35) 100%)"></div>
<div class="kl" style="left:12.199999999999989px;top:141.98px">Jump</div>
<div class="kk" style="left:138.49999999999997px;top:145.57999999999998px;width:7.2px"><span style="display:inline-block;width:3.6px;height:1.6px;border:0.6px solid #e8e4da;border-top:none;vertical-align:0.4px"></span></div>
<div class="sepv" style="left:160.09999999999997px;top:143.78px"></div>
<div class="ab" style="left:8.199999999999989px;top:159.56000000000003px;width:188.60000000000002px;height:14.2px;border-radius:1.5px;background:linear-gradient(90deg,rgba(24,21,19,0.7) 0%,rgba(24,21,19,0.6) 60%,rgba(24,21,19,0.35) 100%)"></div>
<div class="kl" style="left:12.199999999999989px;top:159.56000000000003px">Sprint</div>
<div class="kk" style="left:130.59999999999997px;top:163.16000000000003px;width:23.0px">L SHIFT</div>
<div class="sepv" style="left:160.09999999999997px;top:161.36000000000004px"></div>
<div class="ab" style="left:8.199999999999989px;top:177.14000000000001px;width:188.60000000000002px;height:14.2px;border-radius:1.5px;background:linear-gradient(90deg,rgba(24,21,19,0.7) 0%,rgba(24,21,19,0.6) 60%,rgba(24,21,19,0.35) 100%)"></div>
<div class="kl" style="left:12.199999999999989px;top:177.14000000000001px">Crouch</div>
<div class="kk" style="left:132.09999999999997px;top:180.74px;width:20.0px">L CTRL</div>
<div class="sepv" style="left:160.09999999999997px;top:178.94000000000003px"></div>
<div class="ab" style="left:5.800000000000011px;top:200.80000000000004px;width:191.0px;height:14.2px;border-radius:1.5px;background:linear-gradient(90deg,rgba(10,10,10,0.55) 0%,rgba(10,10,10,0) 45%,rgba(10,10,10,0) 70%,rgba(10,10,10,0.6) 100%),linear-gradient(180deg,#1c1a17 0%,#2e271c 45%,#5a4628 80%,#7a5e34 100%);border:0.6px solid #a09a8c"></div>
<div class="kl" style="left:9.800000000000011px;top:200.80000000000004px">Use | Pickup</div>
<div class="ab" style="left:127.09999999999997px;top:202.40000000000003px;width:29.6px;height:10.8px;border-radius:1.2px;background:#c7bfa8"></div>
<div class="ab" style="left:138.89999999999998px;top:204.30000000000004px;width:6.4px;height:7px;border:0.6px solid #2a2724;border-radius:0.6px;background:#1e1c19;color:#eee;font-size:4.6px;line-height:5.8px;text-align:center;font-weight:bold">E</div>
<div class="sepv" style="left:160.09999999999997px;top:202.60000000000005px"></div>
<div class="ab" style="left:5.800000000000011px;top:218.60000000000005px;width:191.0px;height:14.2px;border-radius:1.5px;background:linear-gradient(90deg,rgba(24,21,19,0.7) 0%,rgba(24,21,19,0.6) 60%,rgba(24,21,19,0.35) 100%)"></div>
<div class="kl" style="left:9.800000000000011px;top:218.60000000000005px">Drop | Unequip</div>
<div class="kk" style="left:138.49999999999997px;top:222.20000000000005px;width:7.2px">Q</div>
<div class="sepv" style="left:160.09999999999997px;top:220.40000000000006px"></div>
<div class="ab" style="left:5.800000000000011px;top:236.40000000000006px;width:191.0px;height:14.2px;border-radius:1.5px;background:linear-gradient(90deg,rgba(24,21,19,0.7) 0%,rgba(24,21,19,0.6) 60%,rgba(24,21,19,0.35) 100%)"></div>
<div class="kl" style="left:9.800000000000011px;top:236.40000000000006px">L. Punch | Shoot | Throw | Reload</div>
<div class="ab" style="left:139.49999999999997px;top:239.30000000000007px;width:5.4px;height:8px;border-radius:2.4px 2.4px 2px 2px;background:#bdb8ad"></div><div class="ab" style="left:139.49999999999997px;top:239.30000000000007px;width:2.7px;height:3.6px;border-radius:2.4px 0 0 0;background:#f2efe8"></div><div class="ab" style="left:139.49999999999997px;top:242.90000000000006px;width:5.4px;height:0.5px;background:#555"></div>
<div class="sepv" style="left:160.09999999999997px;top:238.20000000000007px"></div>
<div class="ab" style="left:5.800000000000011px;top:254.20000000000002px;width:191.0px;height:14.2px;border-radius:1.5px;background:linear-gradient(90deg,rgba(24,21,19,0.7) 0%,rgba(24,21,19,0.6) 60%,rgba(24,21,19,0.35) 100%)"></div>
<div class="kl" style="left:9.800000000000011px;top:254.20000000000002px">L. Punch | Aim | Throw Prime</div>
<div class="ab" style="left:139.49999999999997px;top:257.1px;width:5.4px;height:8px;border-radius:2.4px 2.4px 2px 2px;background:#bdb8ad"></div><div class="ab" style="left:139.49999999999997px;top:257.1px;width:2.7px;height:3.6px;border-radius:2.4px 0 0 0;background:#f2efe8"></div><div class="ab" style="left:139.49999999999997px;top:260.70000000000005px;width:5.4px;height:0.5px;background:#555"></div>
<div class="sepv" style="left:160.09999999999997px;top:256.0px"></div>
<div class="ab" style="left:5.800000000000011px;top:272.0px;width:191.0px;height:14.2px;border-radius:1.5px;background:linear-gradient(90deg,rgba(24,21,19,0.7) 0%,rgba(24,21,19,0.6) 60%,rgba(24,21,19,0.35) 100%)"></div>
<div class="kl" style="left:9.800000000000011px;top:272.0px">Block | Parry</div>
<div class="kk" style="left:138.49999999999997px;top:275.6px;width:7.2px">V</div>
<div class="sepv" style="left:160.09999999999997px;top:273.8px"></div>
<div class="kk" style="left:170.05px;top:275.6px;width:17.5px">L ALT</div>
<div class="ab" style="left:5.800000000000011px;top:289.8px;width:191.0px;height:14.2px;border-radius:1.5px;background:linear-gradient(90deg,rgba(24,21,19,0.7) 0%,rgba(24,21,19,0.6) 60%,rgba(24,21,19,0.35) 100%)"></div>
<div class="kl" style="left:9.800000000000011px;top:289.8px">Push</div>
<div class="kk" style="left:138.49999999999997px;top:293.40000000000003px;width:7.2px">R</div>
<div class="sepv" style="left:160.09999999999997px;top:291.6px"></div>
<div class="ab" style="left:5.800000000000011px;top:307.6px;width:191.0px;height:14.2px;border-radius:1.5px;background:linear-gradient(90deg,rgba(24,21,19,0.7) 0%,rgba(24,21,19,0.6) 60%,rgba(24,21,19,0.35) 100%)"></div>
<div class="kl" style="left:9.800000000000011px;top:307.6px">Whip | Grab Enemy</div>
<div class="kk" style="left:138.49999999999997px;top:311.20000000000005px;width:7.2px">F</div>
<div class="sepv" style="left:160.09999999999997px;top:309.40000000000003px"></div>
<div class="ab" style="left:5.800000000000011px;top:325.40000000000003px;width:191.0px;height:14.2px;border-radius:1.5px;background:linear-gradient(90deg,rgba(24,21,19,0.7) 0%,rgba(24,21,19,0.6) 60%,rgba(24,21,19,0.35) 100%)"></div>
<div class="kl" style="left:9.800000000000011px;top:325.40000000000003px">Journal</div>
<div class="kk" style="left:138.49999999999997px;top:329.00000000000006px;width:7.2px">J</div>
<div class="sepv" style="left:160.09999999999997px;top:327.20000000000005px"></div>
<div class="kk" style="left:171.60000000000002px;top:329.00000000000006px;width:14.4px">CAPS</div>
<div class="ab" style="left:5.800000000000011px;top:343.2px;width:191.0px;height:14.2px;border-radius:1.5px;background:linear-gradient(90deg,rgba(24,21,19,0.7) 0%,rgba(24,21,19,0.6) 60%,rgba(24,21,19,0.35) 100%)"></div>
<div class="kl" style="left:9.800000000000011px;top:343.2px">Inventory</div>
<div class="kk" style="left:136.59999999999997px;top:346.8px;width:11.0px">TAB</div>
<div class="sepv" style="left:160.09999999999997px;top:345.0px"></div>
<div class="kk" style="left:170.05px;top:346.8px;width:17.5px">RIGHT</div>
<div class="ab" style="left:2.0000000000000115px;top:207.2px;width:1.6px;height:1.6px;border-radius:1px;background:#ddd"></div>
<div class="ab" style="left:2.0000000000000115px;top:42.80000000000001px;width:1.6px;height:1.6px;border-radius:1px;background:#ddd"></div>
<div class="ab" style="left:201.00000000000006px;top:43.3px;width:0.8px;height:55px;background:#a8a397"></div>
<div class="ab" style="left:201.00000000000006px;top:265.3px;width:0.8px;height:57px;background:#a8a397"></div>
</div>
<div class="ab" style="left:0;top:460.6px;width:640px;height:2px;background:#f4f6f9"></div>
</body></html>
